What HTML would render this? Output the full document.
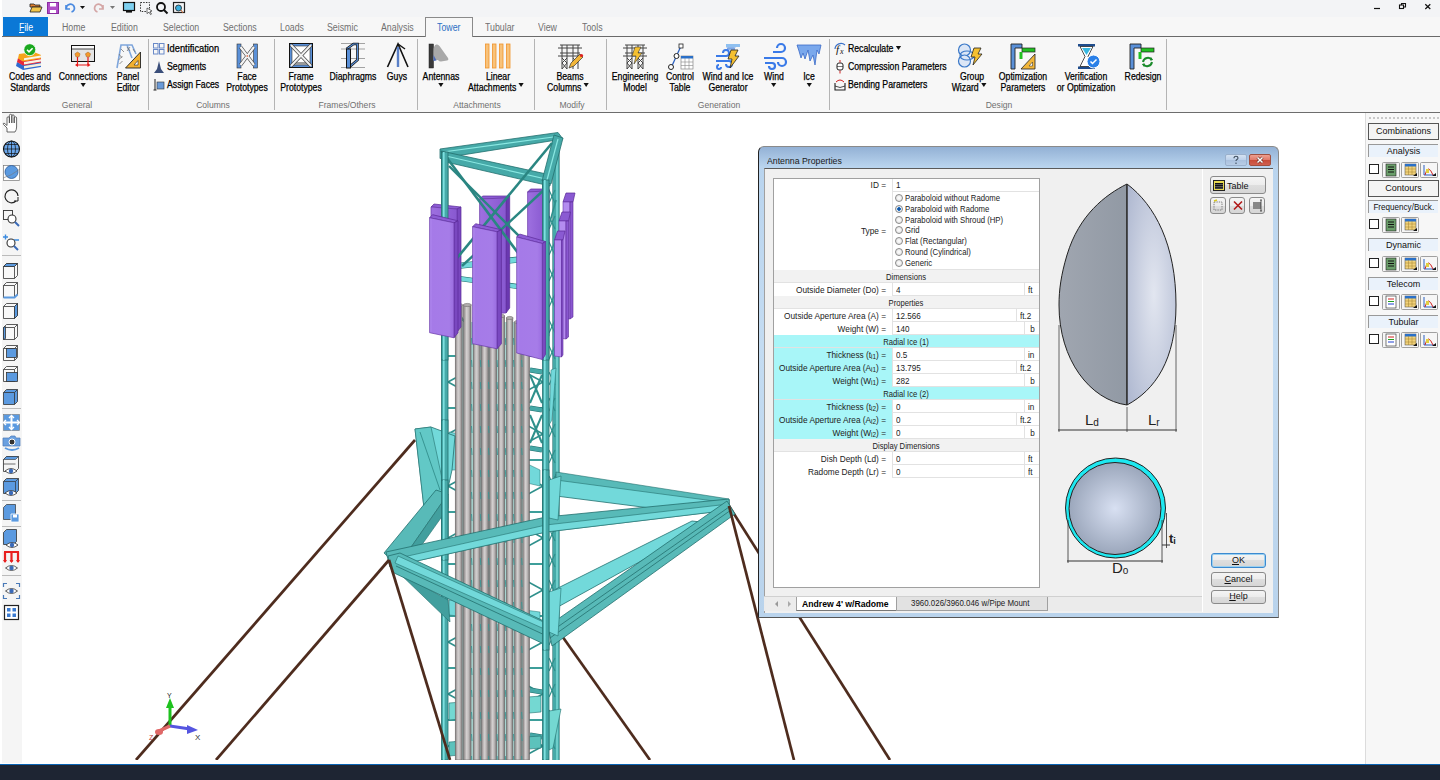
<!DOCTYPE html>
<html><head><meta charset="utf-8">
<style>
*{box-sizing:border-box;margin:0;padding:0}
html,body{width:1440px;height:780px;overflow:hidden;background:#fff;font-family:"Liberation Sans",sans-serif;position:relative}
.a{position:absolute}
.t{position:absolute;white-space:nowrap;font-size:10px;color:#111;letter-spacing:-0.3px}
.c{text-align:center}
#qat{left:0;top:0;width:1440px;height:17px;background:#f3f4f6}
#tabs{left:0;top:17px;width:1440px;height:20px;background:#f7f7f7}
#ribbon{left:0;top:37px;width:1440px;height:75px;background:#f7f7f7}
.tab{position:absolute;top:22px;font-size:10px;color:#707070;white-space:nowrap;transform:scaleX(.88);transform-origin:0 0}
.sep{position:absolute;top:39px;width:1px;height:71px;background:#b4b4b4}
.grp{position:absolute;top:99px;font-size:9.5px;color:#707070;white-space:nowrap;transform:translateX(-50%) scaleX(.9)}
.bl{position:absolute;font-size:10px;color:#000;-webkit-text-stroke:.25px #000;white-space:nowrap;text-align:center;line-height:11px;transform:translateX(-50%) scaleX(.87)}
.sl{position:absolute;font-size:10px;color:#000;-webkit-text-stroke:.25px #000;white-space:nowrap;transform:scaleX(.87);transform-origin:0 0}
.arr{display:inline-block;width:0;height:0;border-left:3.5px solid transparent;border-right:3.5px solid transparent;border-top:4px solid #111;vertical-align:middle;position:relative;top:-3px}
.dt{position:absolute;white-space:nowrap;font-size:9.5px;color:#1a1a1a;transform:scaleX(.92);transform-origin:0 0}
.gt{position:absolute;white-space:nowrap;font-size:9px;color:#222;line-height:11px}
.gt sub{font-size:7px;vertical-align:-1px;line-height:0}
.rad{position:absolute;width:8px;height:8px;border-radius:50%;border:1px solid #8a8a8a;background:radial-gradient(#fff,#ddd)}
.rad.sel{background:radial-gradient(circle,#0a3a78 0,#2a7ad0 40%,#e8f0f8 50%,#ddd)}
.btn{position:absolute;border:1px solid #8a8a8a;border-radius:3px;background:linear-gradient(#f4f4f4,#ececec 50%,#dedede 50%,#d6d6d6)}
.rbtn{position:absolute;left:1368px;width:71px;border:1px solid #555;background:#f4f4f4;font-size:9px;color:#111;text-align:center;line-height:15px;white-space:nowrap}
.rhdr{position:absolute;left:1368px;width:70px;height:13px;border-top:1px solid #999;border-left:1px solid #999;background:#eaf2fb;font-size:9px;color:#111;text-align:center;line-height:12px;white-space:nowrap}
#grid .gt{margin-top:1px}
</style></head><body>
<div id="qat" class="a"></div>
<div id="tabs" class="a"></div>
<div id="ribbon" class="a"></div>
<div class="a" style="left:0;top:0;width:2px;height:765px;background:#fff"></div>
<!-- tab line -->
<div class="a" style="left:2px;top:36px;width:1438px;height:1px;background:#6a6a6a"></div>
<div class="a" style="left:3px;top:17px;width:45px;height:19px;background:#0b78d6"></div>
<div class="tab" style="left:19px;color:#fff"><u>F</u>ile</div>
<div class="tab" style="left:62px">Home</div>
<div class="tab" style="left:111px">Edition</div>
<div class="tab" style="left:163px">Selection</div>
<div class="tab" style="left:223px">Sections</div>
<div class="tab" style="left:280px">Loads</div>
<div class="tab" style="left:327px">Seismic</div>
<div class="tab" style="left:381px">Analysis</div>
<div class="a" style="left:425px;top:17px;width:48px;height:20px;border:1px solid #8a8a8a;border-bottom:none;background:#f7f7f7"></div>
<div class="tab" style="left:437px;color:#2a6fc4">Tower</div>
<div class="tab" style="left:485px">Tubular</div>
<div class="tab" style="left:538px">View</div>
<div class="tab" style="left:582px">Tools</div>
<!-- QAT icons -->
<svg class="a" style="left:0;top:0" width="200" height="17">
 <path d="M30 4h4l1 1h5v2h-10z" fill="#e08030" stroke="#222" stroke-width=".8"/>
 <path d="M30 12l2-5h10l-2 5z" fill="#f3c64a" stroke="#222" stroke-width=".8"/>
 <rect x="47.5" y="2.5" width="11" height="11" fill="#b04ec8" stroke="#8a2aa0"/>
 <rect x="50" y="3" width="6" height="3.5" fill="#fff"/><rect x="50" y="10" width="6" height="3" fill="#fff"/>
 <path d="M66 5v4h4" fill="none" stroke="#4a8ae0" stroke-width="1.6"/><path d="M66.5 9a4 4 0 1 1 5 3" fill="none" stroke="#4a8ae0" stroke-width="1.8"/>
 <path d="M80 6h5l-2.5 3z" fill="#111"/>
 <path d="M103 5v4h-4" fill="none" stroke="#d4a6a6" stroke-width="1.6"/><path d="M102.5 9a4 4 0 1 0-5 3" fill="none" stroke="#d4a6a6" stroke-width="1.8"/>
 <path d="M110 6h5l-2.5 3z" fill="#777"/>
 <rect x="123.5" y="2.5" width="11" height="8" fill="#7ed0f0" stroke="#111" stroke-width="1.2"/><rect x="126" y="11" width="6" height="1.6" fill="#111"/>
 <rect x="140.5" y="2.5" width="9" height="9" fill="none" stroke="#333" stroke-dasharray="1.5 1.2"/><path d="M147 8l5 3-2 .6 1.5 2.5-1 .5-1.5-2.5-2 1.5z" fill="#fff" stroke="#333" stroke-width=".7"/>
 <circle cx="161" cy="7" r="4" fill="none" stroke="#111" stroke-width="1.8"/><path d="M164 10l3.5 3.5" stroke="#111" stroke-width="2"/>
 <rect x="173.5" y="2.5" width="11" height="10" fill="none" stroke="#222" stroke-width="1.2"/><circle cx="178.5" cy="8" r="3" fill="#3ab0e0" stroke="#222" stroke-width=".8"/><path d="M181 10l2 3" stroke="#c06030" stroke-width="1"/>
</svg>
<!-- ribbon icons -->
<svg class="a" style="left:0;top:37px" width="1170" height="60">
 <!-- Codes and Standards: books with check -->
 <g transform="translate(0,-37)">
  <path d="M17 62l6 3 18-3v5l-18 3-7-4z" fill="#2e6ad0"/><path d="M24 66l17-2.8v2.6l-17 2.8z" fill="#f4efdc"/>
  <path d="M18 58l5 3 18-3v4.5l-18 3-6-3.5z" fill="#e8283a"/><path d="M24 62l17-2.8v2.4l-17 2.8z" fill="#f6f2e4"/>
  <path d="M19 54l15-2 7 3v3.5l-18 3-5-3z" fill="#f6a41a"/><path d="M24 58.2l17-2.8v2l-17 2.8z" fill="#f8f4ea"/>
  <circle cx="29.8" cy="49.7" r="6" fill="#1aa81e" stroke="#fff" stroke-width=".8"/><path d="M27 49.8l2 2 3.6-3.6" fill="none" stroke="#fff" stroke-width="1.6"/>
 </g>
 <!-- Connections -->
 <g transform="translate(71,8)">
  <rect x=".5" y=".5" width="23" height="16" fill="#e4e4e4" stroke="#111" stroke-width="1"/><rect x="1" y="1" width="22" height="3" fill="#fafafa"/><path d="M1 4h22" stroke="#333" stroke-width=".9"/>
  <path d="M6.5 7l2.6 1.8-1 3h-3.2l-1-3z" fill="#f59a2a" stroke="#8a4a10" stroke-width=".4"/><path d="M17 7l2.6 1.8-1 3h-3.2l-1-3z" fill="#f59a2a" stroke="#8a4a10" stroke-width=".4"/>
  <path d="M6.5 12v8M17 12v8M6 20h11.5" stroke="#e81818" stroke-width="1.2"/><path d="M4 20l3-2v4zM19.5 20l-3-2v4z" fill="#e81818"/>
 </g>
 <!-- Panel Editor -->
 <g transform="translate(116,7)">
  <path d="M1 24L5 1h6l5 13M11 1l5 0 4 9" fill="none" stroke="#7fa6dc" stroke-width="1.6"/>
  <path d="M2.5 16l4-4M3 10l3 4M3.5 20l3-3M5 5l3 3M11 3l3 4M14 3l-3 4M17 5l2 3" stroke="#777" stroke-width=".8"/>
  <path d="M9.5 24L24.5 8v16z" fill="#f2b030" stroke="#222" stroke-width=".9"/><path d="M18 21l4-4.5v4.5z" fill="#fff" stroke="#222" stroke-width=".6"/>
 </g>
 <!-- Identification small -->
 <g transform="translate(153,6)" fill="none" stroke="#6a8ac8" stroke-width="1">
  <rect x=".5" y=".5" width="4.5" height="4.5"/><rect x="6.5" y=".5" width="4.5" height="4.5"/><rect x=".5" y="6.5" width="4.5" height="4.5"/><rect x="6.5" y="6.5" width="4.5" height="4.5"/>
 </g>
 <path d="M159 24l2 8 3 4h-10l3-4z" fill="#3a4e7a"/>
 <path d="M155 42v11M153.5 53h3" stroke="#222" stroke-width="1"/><rect x="157" y="45" width="7" height="7" fill="#6a9ad8" stroke="#333" stroke-width=".6"/>
 <!-- Face Prototypes -->
 <g transform="translate(237,7)">
  <rect x="0" y="0" width="4" height="24" fill="#5a90d8" stroke="#333" stroke-width=".6"/><rect x="16.5" y="0" width="4" height="24" fill="#5a90d8" stroke="#333" stroke-width=".6"/>
  <path d="M3.5 3l13.5 18M17 3L3.5 21" stroke="#444" stroke-width="3.6"/><path d="M3.5 3l13.5 18M17 3L3.5 21" stroke="#f4f4f4" stroke-width="2.2"/><circle cx="10.25" cy="12" r=".8" fill="#e05020"/>
 </g>
 <!-- Frame Prototypes -->
 <g transform="translate(289,6)">
  <rect x=".5" y=".5" width="23" height="24" fill="#5a90d8" stroke="#111" stroke-width="1"/><rect x="3" y="3" width="18" height="19" fill="#fff" stroke="#333" stroke-width=".6"/><rect x="3" y="19" width="18" height="3" fill="#999"/>
  <path d="M2 2l20 21M22 2L2 23" stroke="#444" stroke-width="3.4"/><path d="M2 2l20 21M22 2L2 23" stroke="#f0f0f0" stroke-width="2"/>
 </g>
 <!-- Diaphragms -->
 <g transform="translate(341,6)">
  <path d="M0 .5h24M0 6h24M0 15.5h24M0 24.5h24" stroke="#999" stroke-width=".9"/>
  <path d="M5.5 6l7-5h4v16l-7 6" fill="none" stroke="#111" stroke-width="2.6"/><path d="M5.5 6l7-5h4v16l-7 6" fill="none" stroke="#5a90d8" stroke-width="1.2"/>
  <rect x="5.5" y="6" width="4" height="19" fill="#5a90d8" stroke="#111" stroke-width="1"/>
 </g>
 <!-- Guys -->
 <g transform="translate(386,6)">
  <path d="M1.5 24L12 1l10 23" fill="none" stroke="#111" stroke-width="1.6"/><path d="M12 4v20" stroke="#5a80c8" stroke-width="2.4"/><path d="M12 1l7 5" fill="none" stroke="#111" stroke-width="1.5"/>
 </g>
 <!-- Antennas -->
 <g transform="translate(428,7)">
  <rect x="1" y="0" width="4.5" height="24" fill="#3a3a3a" stroke="#222" stroke-width=".5"/><path d="M5.5 16V7q0-6 3-6.5 1.5-.5 3 1.5l8.5 12q1 2-1 2.5l-6 1q-2 0-3-1.5z" fill="#a8a8a8"/><path d="M5.5 11l3 5.5-3 .5z" fill="#4a6ab8"/>
 </g>
 <!-- Linear Attachments -->
 <g transform="translate(485,7)" fill="#f8c27a" stroke="#f0932a" stroke-width=".8">
  <rect x=".5" y="0" width="3.5" height="24"/><rect x="7.5" y="0" width="3.5" height="24"/><rect x="14.5" y="0" width="3.5" height="24"/><rect x="21.5" y="0" width="3.5" height="24"/>
 </g>
 <!-- Beams Columns -->
 <g transform="translate(558,7)">
  <path d="M2 1h20M0 4h24M2 9h20M0 12h24M4 1v24M9 1v24M15 1v24M20 1v24M4 14l5 5M9 14l-5 5M4 19l5 6M9 19l-5 6M15 14l5 5M20 14l-5 5" stroke="#444" stroke-width="1"/>
  <path d="M11 24l2-5 9-9 3 3-9 9z" fill="#f2b63a" stroke="#333" stroke-width=".7"/><circle cx="23.5" cy="11.5" r="1.6" fill="#e02020"/>
 </g>
 <!-- Engineering Model -->
 <g transform="translate(623,7)">
  <path d="M2 1h20M0 4h24M2 9h20M0 12h24M4 1v24M9 1v24M15 1v24M20 1v24M4 14l5 5M9 14l-5 5M4 19l5 6M9 19l-5 6M15 14l5 5M20 14l-5 5M15 19l5 6M20 19l-5 6" stroke="#444" stroke-width="1"/>
  <path d="M12 3h6l-3 6h4l-8 11 2-8h-4z" fill="#f5c030" stroke="#333" stroke-width=".6"/>
 </g>
 <!-- Control Table -->
 <g transform="translate(668,7)">
  <path d="M3 24L13 2" stroke="#2a60c0" stroke-width="1.3"/><circle cx="3" cy="23" r="2.5" fill="#fff" stroke="#222"/><circle cx="8.5" cy="12" r="2.5" fill="#fff" stroke="#222"/><rect x="11" y="0" width="4" height="4" fill="#fff" stroke="#222" stroke-width=".8"/>
  <rect x="13" y="12" width="12" height="13" fill="#fff" stroke="#888" stroke-width=".7"/><rect x="13" y="12" width="12" height="2.5" fill="#2a70c8"/><path d="M13 18h12M13 21.5h12M17 14v11M21 14v11" stroke="#888" stroke-width=".6"/>
 </g>
 <!-- Wind and Ice Generator -->
 <g transform="translate(716,7)">
  <path d="M10 0h14v3H10z" fill="#8fc0f0"/><path d="M11 3l1 3 1-3 1 3 1-3 1 3 1-3 1 3 1-3" stroke="#5a90e0" fill="none" stroke-width=".8"/>
  <path d="M0 12h10a3 3 0 1 0-3-3M0 17h13a3 3 0 1 1-3 3M3 21a2 2 0 1 0 2 2" fill="none" stroke="#3a7ae8" stroke-width="2"/>
  <path d="M15 6h7l-3 6h4l-9 12 2-9h-4z" fill="#f5c030" stroke="#222" stroke-width=".8"/>
 </g>
 <!-- Wind -->
 <g transform="translate(763,8)" fill="none" stroke="#3a7ae8" stroke-width="2.2">
  <path d="M10 7h8a4 4 0 1 0-4-4"/><path d="M1 13h18a4 4 0 1 1-4 4"/><path d="M2 18h7a3 3 0 1 1-3 3"/>
 </g>
 <!-- Ice -->
 <g transform="translate(797,8)">
  <path d="M0 0h24l-2 9-2-4-2 15-2-10-3 6-2-11-3 9-2-6-2 5-2-7z" fill="#7aa8ec" stroke="#3a6ac8" stroke-width=".8"/>
 </g>
 <!-- Recalculate fx -->
 <g transform="translate(834,4)">
  <path d="M1 8a6 6 0 0 1 10-4" fill="none" stroke="#3a70c8" stroke-width="1.2"/>
  <text x="2" y="12" font-family="Liberation Serif" font-style="italic" font-size="11" fill="#111">f</text><text x="6" y="13" font-family="Liberation Serif" font-style="italic" font-size="8" fill="#111">x</text>
 </g>
 <g transform="translate(836,23)">
  <rect x="1" y="3" width="6" height="7" rx="2" fill="#fff" stroke="#222"/><path d="M1 6.5h6" stroke="#222" stroke-width=".6"/><path d="M4 0v2.5M4 10.5v3" stroke="#d02020" stroke-width="1"/>
 </g>
 <g transform="translate(834,41)">
  <path d="M1 5v7h10V5" fill="none" stroke="#222" stroke-width="1.1"/><path d="M1 8q5 3 10 0" fill="none" stroke="#222" stroke-width=".8"/><path d="M2 4q4-4 8 0" fill="none" stroke="#d02020" stroke-width="1"/>
 </g>
 <!-- Group Wizard -->
 <g transform="translate(958,6)">
  <circle cx="6.5" cy="7" r="6" fill="#dbe6f6" stroke="#3a78c8" stroke-width="1.2"/><circle cx="6.5" cy="18" r="6" fill="#dbe6f6" stroke="#3a78c8" stroke-width="1.2"/><ellipse cx="9" cy="12.5" rx="7" ry="4.5" fill="none" stroke="#3a78c8" stroke-width="1.2"/>
  <path d="M16 5h7l-3 6h4l-9 11 2-8h-4z" fill="#f5c030" stroke="#222" stroke-width=".8"/>
 </g>
 <!-- Optimization Parameters -->
 <g transform="translate(1011,7)">
  <path d="M0 25V0h11v4H4v21z" fill="#5a90d8" stroke="#222" stroke-width=".9"/>
  <rect x="11" y="4" width="13" height="4" fill="#22c022" stroke="#222" stroke-width=".7"/><path d="M10 8v7" stroke="#22c022" stroke-width="3"/>
  <path d="M10 25L24 10v15z" fill="#f2b63a" stroke="#222" stroke-width=".8"/><path d="M18 22l3.5-4v4z" fill="#fff" stroke="#222" stroke-width=".5"/>
 </g>
 <!-- Verification -->
 <g transform="translate(1078,7)">
  <rect x="0" y="0" width="17" height="2.5" fill="#1f4c8c"/><rect x="0" y="22.5" width="17" height="2.5" fill="#1f4c8c"/>
  <path d="M2 2.5h13l-5 10 5 10H2l5-10z" fill="#fff" stroke="#222" stroke-width=".8"/><path d="M4 4h9l-4.5 7z" fill="#3ab8e0"/>
  <circle cx="15.5" cy="17.5" r="6.5" fill="#2a80e8" stroke="#fff" stroke-width="1"/><path d="M12.5 17.5l2 2 4-4" fill="none" stroke="#fff" stroke-width="1.5"/>
 </g>
 <!-- Redesign -->
 <g transform="translate(1130,7)">
  <path d="M0 25V0h11v4H4v21z" fill="#5a90d8" stroke="#222" stroke-width=".9"/>
  <rect x="11" y="4" width="13" height="4" fill="#22c022" stroke="#222" stroke-width=".7"/><path d="M10 8v7" stroke="#22c022" stroke-width="3"/>
  <path d="M13 18a5 5 0 0 1 9-2M22 18a5 5 0 0 1-9 2" fill="none" stroke="#1a8a2a" stroke-width="2"/><path d="M21 13l2 3-3 .5zM14 23l-2-3 3-.5z" fill="#1a8a2a"/>
 </g>
</svg>
<!-- ribbon labels -->
<div class="bl" style="left:29.5px;top:71px">Codes and<br>Standards</div>
<div class="bl" style="left:82.5px;top:71px">Connections<br><span class="arr"></span></div>
<div class="bl" style="left:128px;top:71px">Panel<br>Editor</div>
<div class="sl" style="left:166.5px;top:43px;transform:scaleX(.93)">Identification</div>
<div class="sl" style="left:166.5px;top:61px">Segments</div>
<div class="sl" style="left:167px;top:79px">Assign Faces</div>
<div class="bl" style="left:246.5px;top:71px">Face<br>Prototypes</div>
<div class="bl" style="left:300.5px;top:71px">Frame<br>Prototypes</div>
<div class="bl" style="left:352.7px;top:71px">Diaphragms</div>
<div class="bl" style="left:397px;top:71px">Guys</div>
<div class="bl" style="left:441px;top:71px">Antennas<br><span class="arr"></span></div>
<div class="bl" style="left:497.5px;top:71px">Linear</div>
<div class="bl" style="left:496px;top:82px">Attachments <span class="arr"></span></div>
<div class="bl" style="left:570px;top:71px">Beams</div>
<div class="bl" style="left:568px;top:82px">Columns <span class="arr"></span></div>
<div class="bl" style="left:635px;top:71px">Engineering<br>Model</div>
<div class="bl" style="left:680.4px;top:71px">Control<br>Table</div>
<div class="bl" style="left:728px;top:71px">Wind and Ice<br>Generator</div>
<div class="bl" style="left:774.3px;top:71px">Wind<br><span class="arr"></span></div>
<div class="bl" style="left:809px;top:71px">Ice<br><span class="arr"></span></div>
<div class="sl" style="left:847.6px;top:43px">Recalculate <span class="arr" style="top:-1px"></span></div>
<div class="sl" style="left:847.6px;top:61px">Compression Parameters</div>
<div class="sl" style="left:847.6px;top:79px">Bending Parameters</div>
<div class="bl" style="left:972px;top:71px">Group</div>
<div class="bl" style="left:969px;top:82px">Wizard <span class="arr"></span></div>
<div class="bl" style="left:1023px;top:71px">Optimization<br>Parameters</div>
<div class="bl" style="left:1086.3px;top:71px">Verification<br>or Optimization</div>
<div class="bl" style="left:1142.5px;top:71px">Redesign</div>
<div class="sep" style="left:148px"></div>
<div class="sep" style="left:274px"></div>
<div class="sep" style="left:417px"></div>
<div class="sep" style="left:534px"></div>
<div class="sep" style="left:606px"></div>
<div class="sep" style="left:829px"></div>
<div class="sep" style="left:1166px"></div>
<div class="grp" style="left:77px">General</div>
<div class="grp" style="left:212.5px">Columns</div>
<div class="grp" style="left:346.7px">Frames/Others</div>
<div class="grp" style="left:477px">Attachments</div>
<div class="grp" style="left:571.8px">Modify</div>
<div class="grp" style="left:718.7px">Generation</div>
<div class="grp" style="left:999.2px">Design</div>

<!-- ribbon bottom -->
<div class="a" style="left:2px;top:112px;width:1438px;height:1px;background:#6d6d6d"></div>

<!-- window buttons -->
<svg class="a" style="left:1370px;top:0" width="70" height="14">
 <path d="M4 8.5h6" stroke="#111" stroke-width="1.2"/>
 <rect x="29.5" y="5" width="4" height="3.5" fill="none" stroke="#111" stroke-width="1.1"/><path d="M31.5 5V3.5h4v3.5h-2" fill="none" stroke="#111" stroke-width="1.1"/>
 <path d="M55.3 4.2l5 4.8M60.3 4.2l-5 4.8" stroke="#111" stroke-width="1.2"/>
</svg>
<!-- left toolbar -->
<div class="a" style="left:2px;top:113px;width:20px;height:650px;background:#f5f5f5"></div>
<!-- right panel -->
<div class="a" style="left:1365px;top:113px;width:1px;height:651px;background:#dcdcdc"></div>
<div class="a" style="left:1366px;top:113px;width:74px;height:651px;background:#f7f7f7"></div>
<!--LEFTTB--><svg class="a" style="left:0;top:113px" width="24" height="520">
<defs><g id="cube"><path d="M3.5 4.5l3-3h11v12l-3 3h-11z" fill="#f8f8f8" stroke="#333" stroke-width=".8"/><path d="M3.5 4.5h11v12M14.5 4.5l3-3" fill="none" stroke="#333" stroke-width=".8"/></g>
<g id="eye"><path d="M4 0q6-5 12 0q-6 5-12 0z" fill="#fff" stroke="#333" stroke-width=".8"/><circle cx="10" cy="0" r="2.2" fill="#3a6ab8"/></g></defs>
<g transform="translate(0,0)">
 <path d="M7 19L7 15L3.5 11.5Q2.8 10.3 4 10L7 12.5L7 5Q7 3.8 8.2 3.8Q9.4 3.8 9.4 5L9.4 10L9.4 2.5Q9.4 1.3 10.6 1.3Q11.8 1.3 11.8 2.5L11.8 10L11.8 3Q11.8 1.8 13 1.8Q14.2 1.8 14.2 3L14.2 10L14.2 5Q14.2 3.8 15.4 3.8Q16.6 3.8 16.6 5L16.6 14Q16.6 17 15 19Z" fill="#fff" stroke="#444" stroke-width=".8"/>
</g>
<g transform="translate(0,36)"><circle cx="11.5" cy="0" r="8" fill="#6aa6ea" stroke="#111" stroke-width="1.1"/><path d="M3.5 0h16M11.5-8v16M5-4.5h13M5 4.5h13" stroke="#111" stroke-width=".7"/><ellipse cx="11.5" cy="0" rx="4" ry="8" fill="none" stroke="#111" stroke-width=".7"/></g>
<g transform="translate(0,60)"><rect x="3.5" y="-7.5" width="16" height="15" fill="#fff" stroke="#777" stroke-width=".7"/><circle cx="11.5" cy="-1" r="6.5" fill="#5b9ae0" stroke="#2a5a9a" stroke-width=".8"/><path d="M3 5q8-2 17-9" stroke="#777" stroke-width=".6" fill="none"/></g>
<g transform="translate(0,82)"><path d="M16 6a6.5 6.5 0 1 1 2-5" fill="none" stroke="#222" stroke-width="1.2"/><path d="M14 6h4v-4" fill="none" stroke="#222" stroke-width="1"/></g>
<g transform="translate(0,105)"><rect x="3.5" y="-7.5" width="9" height="9" fill="none" stroke="#333" stroke-width=".9"/><circle cx="12" cy="1" r="4" fill="#fff" stroke="#333" stroke-width="1.1"/><path d="M15 4l4 4" stroke="#3a6ab8" stroke-width="2"/></g>
<g transform="translate(0,129)"><path d="M3 -5h5M5.5-7.5v5M14 -2h5" stroke="#3a8ae0" stroke-width="1.4"/><circle cx="11" cy="1" r="4" fill="#fff" stroke="#333" stroke-width="1.1"/><path d="M14 4l4 4" stroke="#3a6ab8" stroke-width="2"/></g>
<path d="M2 142.5h19" stroke="#bbb"/>
<g transform="translate(0,149)"><use href="#cube"/><path d="M3.5 4.5l3-3h11l-3 3z" fill="#5b9ae0" stroke="#333" stroke-width=".8"/></g>
<g transform="translate(0,168)"><use href="#cube"/><path d="M3.5 16.5h11l3-3" fill="none" stroke="#5b9ae0" stroke-width="2"/></g>
<g transform="translate(0,189)"><use href="#cube"/><path d="M14.5 4.5l3-3v12l-3 3z" fill="#5b9ae0" stroke="#333" stroke-width=".8"/></g>
<g transform="translate(0,210)"><use href="#cube"/><path d="M3.5 4.5l2-1v12l-2 1z" fill="#5b9ae0" stroke="#333" stroke-width=".8"/></g>
<g transform="translate(0,231)"><use href="#cube"/><rect x="6.5" y="4.5" width="10" height="9" fill="#5b9ae0" stroke="#333" stroke-width=".8"/></g>
<g transform="translate(0,252)"><use href="#cube"/><rect x="6.5" y="7.5" width="11" height="9" fill="#5b9ae0" stroke="#333" stroke-width=".8"/></g>
<g transform="translate(0,275)"><path d="M3.5 4.5l3-3h11v12l-3 3h-11z" fill="#5b9ae0" stroke="#333" stroke-width=".8"/><path d="M3.5 4.5h11v12M14.5 4.5l3-3" fill="none" stroke="#333" stroke-width=".8"/></g>
<path d="M2 295.5h19" stroke="#bbb"/>
<g transform="translate(0,300)"><rect x="3.5" y="1.5" width="16" height="16" fill="#5b9ae0" stroke="#777" stroke-width=".6"/><path d="M11.5 3v13M4 9.5h15" stroke="#fff" stroke-width="2"/><path d="M9 5l2.5-2.5L14 5M9 14l2.5 2.5L14 14M6 7l-2.5 2.5L6 12M17 7l2.5 2.5L17 12" fill="none" stroke="#fff" stroke-width="1.4"/></g>
<g transform="translate(0,321)"><path d="M3 4h6l2-2h4l1 2h4v8H3z" fill="#6aa0e0" stroke="#4a7ab8" stroke-width=".7"/><circle cx="12" cy="8" r="3" fill="#333" stroke="#fff"/><path d="M5 14q7 4 14 0" fill="none" stroke="#5b9ae0" stroke-width="2"/></g>
<g transform="translate(0,342)"><path d="M3.5 4.5l3-3h12v12l-3 3h-12z" fill="none" stroke="#333" stroke-width=".8"/><path d="M3.5 4.5l3-3h12l-3 3z" fill="#5b9ae0" stroke="#333" stroke-width=".6"/><path d="M3.5 9h12" stroke="#333" stroke-width=".7"/><use href="#eye" x="1" y="16"/></g>
<g transform="translate(0,364)"><path d="M3.5 4.5l3-3h12v12l-3 3h-12z" fill="#5b9ae0" stroke="#333" stroke-width=".8"/><path d="M3.5 4.5h12v12M15.5 4.5l3-3" fill="none" stroke="#333" stroke-width=".7"/><use href="#eye" x="1" y="16"/></g>
<path d="M2 387.5h19" stroke="#bbb"/>
<g transform="translate(0,390)"><path d="M3.5 4.5l3-3h9v12l-3 3h-9z" fill="#5b9ae0" stroke="#333" stroke-width=".7"/><path d="M11 11h8v8h-8z" fill="#5b9ae0" stroke="#fff" stroke-width=".8"/><rect x="13" y="11.5" width="4" height="3" fill="#fff"/></g>
<path d="M2 413.5h19" stroke="#bbb"/>
<g transform="translate(0,415)"><path d="M3.5 4.5l3-3h10v12l-3 3h-10z" fill="#5b9ae0" stroke="#333" stroke-width=".8"/><use href="#eye" x="2" y="17"/></g>
<g transform="translate(0,437)"><path d="M4 2h15M5 2v10M11.5 2v10M18 2v10" stroke="#e82020" stroke-width="2.2"/><path d="M3 10l2 3 2-3M9.5 10l2 3 2-3M16 10l2 3 2-3" fill="#e82020"/><use href="#eye" x="1.5" y="18"/></g>
<path d="M2 462.5h19" stroke="#bbb"/>
<g transform="translate(0,468)"><path d="M3.5 6V2.5H7M16 2.5h3.5V6M3.5 14v3.5H7M16 17.5h3.5V14" fill="none" stroke="#4a7ab8" stroke-width="1.2"/><use href="#eye" x="1.5" y="10"/></g>
<g transform="translate(0,491)"><rect x="4.5" y="1.5" width="14" height="14" fill="#fff" stroke="#222" stroke-width="1.2"/><rect x="7" y="4" width="3.5" height="3.5" fill="#3a7ad0"/><rect x="12.5" y="4" width="3.5" height="3.5" fill="#3a7ad0"/><rect x="7" y="9.5" width="3.5" height="3.5" fill="#3a7ad0"/><rect x="12.5" y="9.5" width="3.5" height="3.5" fill="#3a7ad0"/></g>
</svg>
<!--/LEFTTB--><!--RP--><div class="a" style="left:1369px;top:117px;width:70px;height:2px;background:repeating-linear-gradient(90deg,#c8c8c8 0 2px,transparent 2px 4px)"></div>
<div class="rbtn" style="top:123px;height:17px">Combinations</div>
<div class="rhdr" style="top:144px">Analysis</div>
<div class="rbtn" style="top:180px;height:17px">Contours</div>
<div class="rhdr" style="top:200px"><span style="display:inline-block;transform:scaleX(.9)">Frequency/Buck.</span></div>
<div class="rhdr" style="top:238px">Dynamic</div>
<div class="rhdr" style="top:277px">Telecom</div>
<div class="rhdr" style="top:315px">Tubular</div>
<svg class="a" style="left:1366px;top:158px" width="74" height="195">
<defs>
 <g id="cb"><rect x="3.5" y="2.5" width="9" height="9" fill="#fff" stroke="#222" stroke-width="1"/></g>
 <g id="b1"><rect x="16.5" y=".5" width="17" height="15" rx="1" fill="#f6f6f6" stroke="#8a8a8a" stroke-width=".8"/><rect x="20" y="2" width="10" height="12" fill="#6a9e6a" stroke="#222" stroke-width=".6"/><path d="M22 5h6M22 7.5h6M22 10h6" stroke="#111" stroke-width="1"/></g>
 <g id="b1r"><rect x="16.5" y=".5" width="17" height="15" rx="1" fill="#f6f6f6" stroke="#8a8a8a" stroke-width=".8"/><rect x="20" y="2" width="10" height="12" fill="#fff" stroke="#222" stroke-width=".6"/><path d="M22 5h6" stroke="#d02020"/><path d="M22 7.5h6" stroke="#20a020"/><path d="M22 10h6" stroke="#2040d0"/></g>
 <g id="b2"><rect x="35.5" y=".5" width="17" height="15" rx="1" fill="#f6f6f6" stroke="#8a8a8a" stroke-width=".8"/><rect x="39" y="2" width="11" height="11" fill="#f2d27a" stroke="#444" stroke-width=".5"/><rect x="39" y="2" width="11" height="2.5" fill="#2a70c8"/><path d="M39 7h11M39 10h11M42.5 4v9M46 4v9" stroke="#a08030" stroke-width=".5"/><path d="M47 14l4-3v3z" fill="#111"/></g>
 <g id="b3"><rect x="54.5" y=".5" width="17" height="15" rx="1" fill="#f6f6f6" stroke="#8a8a8a" stroke-width=".8"/><path d="M58 3v10h10" fill="none" stroke="#2a60c0" stroke-width="1"/><path d="M59 13q3-12 8 0" fill="none" stroke="#d02020" stroke-width="1"/><rect x="60" y="7" width="3" height="4" fill="#e0d040"/><path d="M66 14l4-3v3z" fill="#111"/></g>
</defs>
<g transform="translate(0,4)"><use href="#cb"/><use href="#b1"/><use href="#b2"/><use href="#b3"/></g>
<g transform="translate(0,59)"><use href="#cb"/><use href="#b1"/><use href="#b2"/></g>
<g transform="translate(0,98)"><use href="#cb"/><use href="#b1"/><use href="#b2"/><use href="#b3"/></g>
<g transform="translate(0,136)"><use href="#cb"/><use href="#b1r"/><use href="#b2"/><use href="#b3"/></g>
<g transform="translate(0,174)"><use href="#cb"/><use href="#b1r"/><use href="#b2"/><use href="#b3"/></g>
</svg>
<!--/RP-->
<!-- bottom bar -->
<div class="a" style="left:0;top:764px;width:1440px;height:1px;background:#0a64b4"></div>
<div class="a" style="left:0;top:765px;width:1440px;height:15px;background:#1e2533"></div>

<!--TOWERSTART--><svg class="a" style="left:0;top:0" width="1440" height="780"><defs>
<clipPath id="vc"><rect x="22" y="113" width="1343" height="647"/></clipPath>
<linearGradient id="pg" x1="0" x2="1"><stop offset="0" stop-color="#8a8484"/><stop offset=".4" stop-color="#d4d0d0"/><stop offset=".65" stop-color="#c0bcbc"/><stop offset="1" stop-color="#7c7878"/></linearGradient>
<linearGradient id="ap" x1="0" x2="1"><stop offset="0" stop-color="#b18af0"/><stop offset=".12" stop-color="#a57ae8"/><stop offset=".8" stop-color="#a67ce8"/><stop offset="1" stop-color="#9a6ce0"/></linearGradient>
<linearGradient id="ab" x1="0" x2="1"><stop offset="0" stop-color="#9e70e0"/><stop offset="1" stop-color="#8858d0"/></linearGradient>
</defs><g clip-path="url(#vc)">
<line x1="415" y1="440" x2="136" y2="760" stroke="#4e2c1e" stroke-width="2.7"/>
<line x1="729" y1="506" x2="890" y2="760" stroke="#4e2c1e" stroke-width="2.7"/>
<line x1="556" y1="137" x2="556" y2="760" stroke="#23706f" stroke-width="7.2"/>
<line x1="556" y1="137" x2="556" y2="760" stroke="#46a9a8" stroke-width="6"/>
<line x1="557" y1="140" x2="557" y2="760" stroke="#8ae8e2" stroke-width="1.2"/>
<line x1="549" y1="190" x2="555" y2="203" stroke="#2f908c" stroke-width="1.2"/>
<line x1="555" y1="190" x2="549" y2="203" stroke="#2f908c" stroke-width="1.2"/>
<line x1="549" y1="216" x2="555" y2="229" stroke="#2f908c" stroke-width="1.2"/>
<line x1="555" y1="216" x2="549" y2="229" stroke="#2f908c" stroke-width="1.2"/>
<line x1="549" y1="242" x2="555" y2="255" stroke="#2f908c" stroke-width="1.2"/>
<line x1="555" y1="242" x2="549" y2="255" stroke="#2f908c" stroke-width="1.2"/>
<line x1="549" y1="268" x2="555" y2="281" stroke="#2f908c" stroke-width="1.2"/>
<line x1="555" y1="268" x2="549" y2="281" stroke="#2f908c" stroke-width="1.2"/>
<line x1="549" y1="294" x2="555" y2="307" stroke="#2f908c" stroke-width="1.2"/>
<line x1="555" y1="294" x2="549" y2="307" stroke="#2f908c" stroke-width="1.2"/>
<line x1="549" y1="320" x2="555" y2="333" stroke="#2f908c" stroke-width="1.2"/>
<line x1="555" y1="320" x2="549" y2="333" stroke="#2f908c" stroke-width="1.2"/>
<line x1="549" y1="346" x2="555" y2="359" stroke="#2f908c" stroke-width="1.2"/>
<line x1="555" y1="346" x2="549" y2="359" stroke="#2f908c" stroke-width="1.2"/>
<line x1="549" y1="372" x2="555" y2="385" stroke="#2f908c" stroke-width="1.2"/>
<line x1="555" y1="372" x2="549" y2="385" stroke="#2f908c" stroke-width="1.2"/>
<line x1="549" y1="398" x2="555" y2="411" stroke="#2f908c" stroke-width="1.2"/>
<line x1="555" y1="398" x2="549" y2="411" stroke="#2f908c" stroke-width="1.2"/>
<line x1="549" y1="424" x2="555" y2="437" stroke="#2f908c" stroke-width="1.2"/>
<line x1="555" y1="424" x2="549" y2="437" stroke="#2f908c" stroke-width="1.2"/>
<line x1="549" y1="450" x2="555" y2="463" stroke="#2f908c" stroke-width="1.2"/>
<line x1="555" y1="450" x2="549" y2="463" stroke="#2f908c" stroke-width="1.2"/>
<line x1="549" y1="476" x2="555" y2="489" stroke="#2f908c" stroke-width="1.2"/>
<line x1="555" y1="476" x2="549" y2="489" stroke="#2f908c" stroke-width="1.2"/>
<line x1="549" y1="502" x2="555" y2="515" stroke="#2f908c" stroke-width="1.2"/>
<line x1="555" y1="502" x2="549" y2="515" stroke="#2f908c" stroke-width="1.2"/>
<line x1="549" y1="528" x2="555" y2="541" stroke="#2f908c" stroke-width="1.2"/>
<line x1="555" y1="528" x2="549" y2="541" stroke="#2f908c" stroke-width="1.2"/>
<line x1="549" y1="554" x2="555" y2="567" stroke="#2f908c" stroke-width="1.2"/>
<line x1="555" y1="554" x2="549" y2="567" stroke="#2f908c" stroke-width="1.2"/>
<line x1="549" y1="580" x2="555" y2="593" stroke="#2f908c" stroke-width="1.2"/>
<line x1="555" y1="580" x2="549" y2="593" stroke="#2f908c" stroke-width="1.2"/>
<line x1="549" y1="606" x2="555" y2="619" stroke="#2f908c" stroke-width="1.2"/>
<line x1="555" y1="606" x2="549" y2="619" stroke="#2f908c" stroke-width="1.2"/>
<line x1="549" y1="632" x2="555" y2="645" stroke="#2f908c" stroke-width="1.2"/>
<line x1="555" y1="632" x2="549" y2="645" stroke="#2f908c" stroke-width="1.2"/>
<line x1="549" y1="658" x2="555" y2="671" stroke="#2f908c" stroke-width="1.2"/>
<line x1="555" y1="658" x2="549" y2="671" stroke="#2f908c" stroke-width="1.2"/>
<line x1="549" y1="684" x2="555" y2="697" stroke="#2f908c" stroke-width="1.2"/>
<line x1="555" y1="684" x2="549" y2="697" stroke="#2f908c" stroke-width="1.2"/>
<line x1="549" y1="710" x2="555" y2="723" stroke="#2f908c" stroke-width="1.2"/>
<line x1="555" y1="710" x2="549" y2="723" stroke="#2f908c" stroke-width="1.2"/>
<line x1="549" y1="736" x2="555" y2="749" stroke="#2f908c" stroke-width="1.2"/>
<line x1="555" y1="736" x2="549" y2="749" stroke="#2f908c" stroke-width="1.2"/>
<line x1="448" y1="330" x2="543" y2="382" stroke="#2f908c" stroke-width="1.6"/>
<line x1="543" y1="330" x2="448" y2="382" stroke="#2f908c" stroke-width="1.6"/>
<line x1="448" y1="356" x2="543" y2="356" stroke="#3d9e9a" stroke-width="2.2"/>
<line x1="448" y1="382" x2="543" y2="434" stroke="#2f908c" stroke-width="1.6"/>
<line x1="543" y1="382" x2="448" y2="434" stroke="#2f908c" stroke-width="1.6"/>
<line x1="448" y1="408" x2="543" y2="408" stroke="#3d9e9a" stroke-width="2.2"/>
<line x1="448" y1="434" x2="543" y2="486" stroke="#2f908c" stroke-width="1.6"/>
<line x1="543" y1="434" x2="448" y2="486" stroke="#2f908c" stroke-width="1.6"/>
<line x1="448" y1="460" x2="543" y2="460" stroke="#3d9e9a" stroke-width="2.2"/>
<line x1="448" y1="486" x2="543" y2="538" stroke="#2f908c" stroke-width="1.6"/>
<line x1="543" y1="486" x2="448" y2="538" stroke="#2f908c" stroke-width="1.6"/>
<line x1="448" y1="512" x2="543" y2="512" stroke="#3d9e9a" stroke-width="2.2"/>
<line x1="448" y1="538" x2="543" y2="590" stroke="#2f908c" stroke-width="1.6"/>
<line x1="543" y1="538" x2="448" y2="590" stroke="#2f908c" stroke-width="1.6"/>
<line x1="448" y1="564" x2="543" y2="564" stroke="#3d9e9a" stroke-width="2.2"/>
<line x1="448" y1="590" x2="543" y2="642" stroke="#2f908c" stroke-width="1.6"/>
<line x1="543" y1="590" x2="448" y2="642" stroke="#2f908c" stroke-width="1.6"/>
<line x1="448" y1="616" x2="543" y2="616" stroke="#3d9e9a" stroke-width="2.2"/>
<line x1="448" y1="642" x2="543" y2="694" stroke="#2f908c" stroke-width="1.6"/>
<line x1="543" y1="642" x2="448" y2="694" stroke="#2f908c" stroke-width="1.6"/>
<line x1="448" y1="668" x2="543" y2="668" stroke="#3d9e9a" stroke-width="2.2"/>
<line x1="448" y1="694" x2="543" y2="746" stroke="#2f908c" stroke-width="1.6"/>
<line x1="543" y1="694" x2="448" y2="746" stroke="#2f908c" stroke-width="1.6"/>
<line x1="448" y1="720" x2="543" y2="720" stroke="#3d9e9a" stroke-width="2.2"/>
<line x1="448" y1="746" x2="543" y2="798" stroke="#2f908c" stroke-width="1.6"/>
<line x1="543" y1="746" x2="448" y2="798" stroke="#2f908c" stroke-width="1.6"/>
<line x1="448" y1="772" x2="543" y2="772" stroke="#3d9e9a" stroke-width="2.2"/>
<polygon points="449,432 470,436 540,470 540,486 470,470 449,470" fill="#72d8da" stroke="#23706f" stroke-width="0.5" stroke-linejoin="round"/>
<polygon points="449,600 540,612 540,625 449,615" fill="#72d8da" stroke="#23706f" stroke-width="0.5" stroke-linejoin="round"/>
<line x1="448" y1="267" x2="543" y2="257" stroke="#23706f" stroke-width="6.2"/>
<line x1="448" y1="267" x2="543" y2="257" stroke="#72d8da" stroke-width="5"/>
<line x1="448" y1="277" x2="543" y2="290" stroke="#23706f" stroke-width="5.2"/>
<line x1="448" y1="277" x2="543" y2="290" stroke="#72d8da" stroke-width="4"/>
<line x1="449" y1="300" x2="470" y2="330" stroke="#2a8682" stroke-width="2.2"/>
<line x1="520" y1="290" x2="542" y2="260" stroke="#2a8682" stroke-width="2.2"/>
<line x1="530" y1="370" x2="542" y2="372" stroke="#23706f" stroke-width="5.2"/>
<line x1="530" y1="370" x2="542" y2="372" stroke="#46a9a8" stroke-width="4"/>
<line x1="530" y1="408" x2="542" y2="410" stroke="#23706f" stroke-width="5.2"/>
<line x1="530" y1="408" x2="542" y2="410" stroke="#46a9a8" stroke-width="4"/>
<line x1="530" y1="448" x2="542" y2="450" stroke="#23706f" stroke-width="5.2"/>
<line x1="530" y1="448" x2="542" y2="450" stroke="#46a9a8" stroke-width="4"/>
<line x1="530" y1="690" x2="542" y2="692" stroke="#23706f" stroke-width="5.2"/>
<line x1="530" y1="690" x2="542" y2="692" stroke="#46a9a8" stroke-width="4"/>
<line x1="530" y1="735" x2="542" y2="737" stroke="#23706f" stroke-width="5.2"/>
<line x1="530" y1="735" x2="542" y2="737" stroke="#46a9a8" stroke-width="4"/>
<line x1="530" y1="375" x2="542" y2="403" stroke="#2f908c" stroke-width="2"/>
<line x1="542" y1="375" x2="530" y2="403" stroke="#2f908c" stroke-width="2"/>
<line x1="530" y1="415" x2="542" y2="443" stroke="#2f908c" stroke-width="2"/>
<line x1="542" y1="415" x2="530" y2="443" stroke="#2f908c" stroke-width="2"/>
<polygon points="551,370 556,368 552,420 549,425" fill="#72d8da" stroke="#23706f" stroke-width="0.5" stroke-linejoin="round"/>
<polygon points="449,703 541,696 541,712 449,720" fill="#74d8d2" stroke="#23706f" stroke-width="0.6" stroke-linejoin="round"/>
<polygon points="549,711 561,709 553,748 549,750" fill="#74d8d2" stroke="#23706f" stroke-width="0.6" stroke-linejoin="round"/>
<polygon points="449,742 541,736 541,748 449,756" fill="#5cc2bc" stroke="#23706f" stroke-width="0.6" stroke-linejoin="round"/>
<rect x="456" y="322" width="73" height="438" fill="#a8d4d0"/>
<rect x="455.3" y="305" width="6.9" height="455" fill="url(#pg)" stroke="#6e6a6a" stroke-width=".7"/>
<ellipse cx="458.75" cy="305" rx="3.75" ry="1.6" fill="#b0acac" stroke="#6f6b6b" stroke-width=".6"/>
<rect x="463.6" y="305" width="7.4" height="455" fill="url(#pg)" stroke="#6e6a6a" stroke-width=".7"/>
<ellipse cx="467.3" cy="305" rx="4.0" ry="1.6" fill="#b0acac" stroke="#6f6b6b" stroke-width=".6"/>
<rect x="473.3" y="318" width="6.9" height="442" fill="url(#pg)" stroke="#6e6a6a" stroke-width=".7"/>
<ellipse cx="476.75" cy="318" rx="3.75" ry="1.6" fill="#b0acac" stroke="#6f6b6b" stroke-width=".6"/>
<rect x="481.5" y="318" width="6.9" height="442" fill="url(#pg)" stroke="#6e6a6a" stroke-width=".7"/>
<ellipse cx="484.95" cy="318" rx="3.75" ry="1.6" fill="#b0acac" stroke="#6f6b6b" stroke-width=".6"/>
<rect x="489.6" y="320" width="6.9" height="440" fill="url(#pg)" stroke="#6e6a6a" stroke-width=".7"/>
<ellipse cx="493.05" cy="320" rx="3.75" ry="1.6" fill="#b0acac" stroke="#6f6b6b" stroke-width=".6"/>
<rect x="498.3" y="316" width="6.2" height="444" fill="url(#pg)" stroke="#6e6a6a" stroke-width=".7"/>
<ellipse cx="501.4" cy="316" rx="3.4" ry="1.6" fill="#b0acac" stroke="#6f6b6b" stroke-width=".6"/>
<rect x="506.6" y="318" width="6.2" height="442" fill="url(#pg)" stroke="#6e6a6a" stroke-width=".7"/>
<ellipse cx="509.7" cy="318" rx="3.4" ry="1.6" fill="#b0acac" stroke="#6f6b6b" stroke-width=".6"/>
<rect x="514.6999999999999" y="322" width="6.6000000000000005" height="438" fill="url(#pg)" stroke="#6e6a6a" stroke-width=".7"/>
<ellipse cx="518.0" cy="322" rx="3.6" ry="1.6" fill="#b0acac" stroke="#6f6b6b" stroke-width=".6"/>
<rect x="522.8" y="330" width="6.6000000000000005" height="430" fill="url(#pg)" stroke="#6e6a6a" stroke-width=".7"/>
<ellipse cx="526.1" cy="330" rx="3.6" ry="1.6" fill="#b0acac" stroke="#6f6b6b" stroke-width=".6"/>
<line x1="471.5" y1="338" x2="472.0" y2="345" stroke="#3c9594" stroke-width="0.9"/>
<line x1="480.3" y1="338" x2="480.8" y2="345" stroke="#3c9594" stroke-width="0.9"/>
<line x1="488.5" y1="338" x2="489.0" y2="345" stroke="#3c9594" stroke-width="0.9"/>
<line x1="497" y1="338" x2="497.5" y2="345" stroke="#3c9594" stroke-width="0.9"/>
<line x1="505.3" y1="338" x2="505.8" y2="345" stroke="#3c9594" stroke-width="0.9"/>
<line x1="513.5" y1="338" x2="514.0" y2="345" stroke="#3c9594" stroke-width="0.9"/>
<line x1="521.6" y1="338" x2="522.1" y2="345" stroke="#3c9594" stroke-width="0.9"/>
<line x1="471.5" y1="360" x2="472.0" y2="367" stroke="#3c9594" stroke-width="0.9"/>
<line x1="480.3" y1="360" x2="480.8" y2="367" stroke="#3c9594" stroke-width="0.9"/>
<line x1="488.5" y1="360" x2="489.0" y2="367" stroke="#3c9594" stroke-width="0.9"/>
<line x1="497" y1="360" x2="497.5" y2="367" stroke="#3c9594" stroke-width="0.9"/>
<line x1="505.3" y1="360" x2="505.8" y2="367" stroke="#3c9594" stroke-width="0.9"/>
<line x1="513.5" y1="360" x2="514.0" y2="367" stroke="#3c9594" stroke-width="0.9"/>
<line x1="521.6" y1="360" x2="522.1" y2="367" stroke="#3c9594" stroke-width="0.9"/>
<line x1="471.5" y1="382" x2="472.0" y2="389" stroke="#3c9594" stroke-width="0.9"/>
<line x1="480.3" y1="382" x2="480.8" y2="389" stroke="#3c9594" stroke-width="0.9"/>
<line x1="488.5" y1="382" x2="489.0" y2="389" stroke="#3c9594" stroke-width="0.9"/>
<line x1="497" y1="382" x2="497.5" y2="389" stroke="#3c9594" stroke-width="0.9"/>
<line x1="505.3" y1="382" x2="505.8" y2="389" stroke="#3c9594" stroke-width="0.9"/>
<line x1="513.5" y1="382" x2="514.0" y2="389" stroke="#3c9594" stroke-width="0.9"/>
<line x1="521.6" y1="382" x2="522.1" y2="389" stroke="#3c9594" stroke-width="0.9"/>
<line x1="471.5" y1="404" x2="472.0" y2="411" stroke="#3c9594" stroke-width="0.9"/>
<line x1="480.3" y1="404" x2="480.8" y2="411" stroke="#3c9594" stroke-width="0.9"/>
<line x1="488.5" y1="404" x2="489.0" y2="411" stroke="#3c9594" stroke-width="0.9"/>
<line x1="497" y1="404" x2="497.5" y2="411" stroke="#3c9594" stroke-width="0.9"/>
<line x1="505.3" y1="404" x2="505.8" y2="411" stroke="#3c9594" stroke-width="0.9"/>
<line x1="513.5" y1="404" x2="514.0" y2="411" stroke="#3c9594" stroke-width="0.9"/>
<line x1="521.6" y1="404" x2="522.1" y2="411" stroke="#3c9594" stroke-width="0.9"/>
<line x1="471.5" y1="426" x2="472.0" y2="433" stroke="#3c9594" stroke-width="0.9"/>
<line x1="480.3" y1="426" x2="480.8" y2="433" stroke="#3c9594" stroke-width="0.9"/>
<line x1="488.5" y1="426" x2="489.0" y2="433" stroke="#3c9594" stroke-width="0.9"/>
<line x1="497" y1="426" x2="497.5" y2="433" stroke="#3c9594" stroke-width="0.9"/>
<line x1="505.3" y1="426" x2="505.8" y2="433" stroke="#3c9594" stroke-width="0.9"/>
<line x1="513.5" y1="426" x2="514.0" y2="433" stroke="#3c9594" stroke-width="0.9"/>
<line x1="521.6" y1="426" x2="522.1" y2="433" stroke="#3c9594" stroke-width="0.9"/>
<line x1="471.5" y1="448" x2="472.0" y2="455" stroke="#3c9594" stroke-width="0.9"/>
<line x1="480.3" y1="448" x2="480.8" y2="455" stroke="#3c9594" stroke-width="0.9"/>
<line x1="488.5" y1="448" x2="489.0" y2="455" stroke="#3c9594" stroke-width="0.9"/>
<line x1="497" y1="448" x2="497.5" y2="455" stroke="#3c9594" stroke-width="0.9"/>
<line x1="505.3" y1="448" x2="505.8" y2="455" stroke="#3c9594" stroke-width="0.9"/>
<line x1="513.5" y1="448" x2="514.0" y2="455" stroke="#3c9594" stroke-width="0.9"/>
<line x1="521.6" y1="448" x2="522.1" y2="455" stroke="#3c9594" stroke-width="0.9"/>
<line x1="471.5" y1="470" x2="472.0" y2="477" stroke="#3c9594" stroke-width="0.9"/>
<line x1="480.3" y1="470" x2="480.8" y2="477" stroke="#3c9594" stroke-width="0.9"/>
<line x1="488.5" y1="470" x2="489.0" y2="477" stroke="#3c9594" stroke-width="0.9"/>
<line x1="497" y1="470" x2="497.5" y2="477" stroke="#3c9594" stroke-width="0.9"/>
<line x1="505.3" y1="470" x2="505.8" y2="477" stroke="#3c9594" stroke-width="0.9"/>
<line x1="513.5" y1="470" x2="514.0" y2="477" stroke="#3c9594" stroke-width="0.9"/>
<line x1="521.6" y1="470" x2="522.1" y2="477" stroke="#3c9594" stroke-width="0.9"/>
<line x1="471.5" y1="492" x2="472.0" y2="499" stroke="#3c9594" stroke-width="0.9"/>
<line x1="480.3" y1="492" x2="480.8" y2="499" stroke="#3c9594" stroke-width="0.9"/>
<line x1="488.5" y1="492" x2="489.0" y2="499" stroke="#3c9594" stroke-width="0.9"/>
<line x1="497" y1="492" x2="497.5" y2="499" stroke="#3c9594" stroke-width="0.9"/>
<line x1="505.3" y1="492" x2="505.8" y2="499" stroke="#3c9594" stroke-width="0.9"/>
<line x1="513.5" y1="492" x2="514.0" y2="499" stroke="#3c9594" stroke-width="0.9"/>
<line x1="521.6" y1="492" x2="522.1" y2="499" stroke="#3c9594" stroke-width="0.9"/>
<line x1="471.5" y1="514" x2="472.0" y2="521" stroke="#3c9594" stroke-width="0.9"/>
<line x1="480.3" y1="514" x2="480.8" y2="521" stroke="#3c9594" stroke-width="0.9"/>
<line x1="488.5" y1="514" x2="489.0" y2="521" stroke="#3c9594" stroke-width="0.9"/>
<line x1="497" y1="514" x2="497.5" y2="521" stroke="#3c9594" stroke-width="0.9"/>
<line x1="505.3" y1="514" x2="505.8" y2="521" stroke="#3c9594" stroke-width="0.9"/>
<line x1="513.5" y1="514" x2="514.0" y2="521" stroke="#3c9594" stroke-width="0.9"/>
<line x1="521.6" y1="514" x2="522.1" y2="521" stroke="#3c9594" stroke-width="0.9"/>
<line x1="471.5" y1="536" x2="472.0" y2="543" stroke="#3c9594" stroke-width="0.9"/>
<line x1="480.3" y1="536" x2="480.8" y2="543" stroke="#3c9594" stroke-width="0.9"/>
<line x1="488.5" y1="536" x2="489.0" y2="543" stroke="#3c9594" stroke-width="0.9"/>
<line x1="497" y1="536" x2="497.5" y2="543" stroke="#3c9594" stroke-width="0.9"/>
<line x1="505.3" y1="536" x2="505.8" y2="543" stroke="#3c9594" stroke-width="0.9"/>
<line x1="513.5" y1="536" x2="514.0" y2="543" stroke="#3c9594" stroke-width="0.9"/>
<line x1="521.6" y1="536" x2="522.1" y2="543" stroke="#3c9594" stroke-width="0.9"/>
<line x1="471.5" y1="558" x2="472.0" y2="565" stroke="#3c9594" stroke-width="0.9"/>
<line x1="480.3" y1="558" x2="480.8" y2="565" stroke="#3c9594" stroke-width="0.9"/>
<line x1="488.5" y1="558" x2="489.0" y2="565" stroke="#3c9594" stroke-width="0.9"/>
<line x1="497" y1="558" x2="497.5" y2="565" stroke="#3c9594" stroke-width="0.9"/>
<line x1="505.3" y1="558" x2="505.8" y2="565" stroke="#3c9594" stroke-width="0.9"/>
<line x1="513.5" y1="558" x2="514.0" y2="565" stroke="#3c9594" stroke-width="0.9"/>
<line x1="521.6" y1="558" x2="522.1" y2="565" stroke="#3c9594" stroke-width="0.9"/>
<line x1="471.5" y1="580" x2="472.0" y2="587" stroke="#3c9594" stroke-width="0.9"/>
<line x1="480.3" y1="580" x2="480.8" y2="587" stroke="#3c9594" stroke-width="0.9"/>
<line x1="488.5" y1="580" x2="489.0" y2="587" stroke="#3c9594" stroke-width="0.9"/>
<line x1="497" y1="580" x2="497.5" y2="587" stroke="#3c9594" stroke-width="0.9"/>
<line x1="505.3" y1="580" x2="505.8" y2="587" stroke="#3c9594" stroke-width="0.9"/>
<line x1="513.5" y1="580" x2="514.0" y2="587" stroke="#3c9594" stroke-width="0.9"/>
<line x1="521.6" y1="580" x2="522.1" y2="587" stroke="#3c9594" stroke-width="0.9"/>
<line x1="471.5" y1="602" x2="472.0" y2="609" stroke="#3c9594" stroke-width="0.9"/>
<line x1="480.3" y1="602" x2="480.8" y2="609" stroke="#3c9594" stroke-width="0.9"/>
<line x1="488.5" y1="602" x2="489.0" y2="609" stroke="#3c9594" stroke-width="0.9"/>
<line x1="497" y1="602" x2="497.5" y2="609" stroke="#3c9594" stroke-width="0.9"/>
<line x1="505.3" y1="602" x2="505.8" y2="609" stroke="#3c9594" stroke-width="0.9"/>
<line x1="513.5" y1="602" x2="514.0" y2="609" stroke="#3c9594" stroke-width="0.9"/>
<line x1="521.6" y1="602" x2="522.1" y2="609" stroke="#3c9594" stroke-width="0.9"/>
<line x1="471.5" y1="624" x2="472.0" y2="631" stroke="#3c9594" stroke-width="0.9"/>
<line x1="480.3" y1="624" x2="480.8" y2="631" stroke="#3c9594" stroke-width="0.9"/>
<line x1="488.5" y1="624" x2="489.0" y2="631" stroke="#3c9594" stroke-width="0.9"/>
<line x1="497" y1="624" x2="497.5" y2="631" stroke="#3c9594" stroke-width="0.9"/>
<line x1="505.3" y1="624" x2="505.8" y2="631" stroke="#3c9594" stroke-width="0.9"/>
<line x1="513.5" y1="624" x2="514.0" y2="631" stroke="#3c9594" stroke-width="0.9"/>
<line x1="521.6" y1="624" x2="522.1" y2="631" stroke="#3c9594" stroke-width="0.9"/>
<line x1="471.5" y1="646" x2="472.0" y2="653" stroke="#3c9594" stroke-width="0.9"/>
<line x1="480.3" y1="646" x2="480.8" y2="653" stroke="#3c9594" stroke-width="0.9"/>
<line x1="488.5" y1="646" x2="489.0" y2="653" stroke="#3c9594" stroke-width="0.9"/>
<line x1="497" y1="646" x2="497.5" y2="653" stroke="#3c9594" stroke-width="0.9"/>
<line x1="505.3" y1="646" x2="505.8" y2="653" stroke="#3c9594" stroke-width="0.9"/>
<line x1="513.5" y1="646" x2="514.0" y2="653" stroke="#3c9594" stroke-width="0.9"/>
<line x1="521.6" y1="646" x2="522.1" y2="653" stroke="#3c9594" stroke-width="0.9"/>
<line x1="471.5" y1="668" x2="472.0" y2="675" stroke="#3c9594" stroke-width="0.9"/>
<line x1="480.3" y1="668" x2="480.8" y2="675" stroke="#3c9594" stroke-width="0.9"/>
<line x1="488.5" y1="668" x2="489.0" y2="675" stroke="#3c9594" stroke-width="0.9"/>
<line x1="497" y1="668" x2="497.5" y2="675" stroke="#3c9594" stroke-width="0.9"/>
<line x1="505.3" y1="668" x2="505.8" y2="675" stroke="#3c9594" stroke-width="0.9"/>
<line x1="513.5" y1="668" x2="514.0" y2="675" stroke="#3c9594" stroke-width="0.9"/>
<line x1="521.6" y1="668" x2="522.1" y2="675" stroke="#3c9594" stroke-width="0.9"/>
<line x1="471.5" y1="690" x2="472.0" y2="697" stroke="#3c9594" stroke-width="0.9"/>
<line x1="480.3" y1="690" x2="480.8" y2="697" stroke="#3c9594" stroke-width="0.9"/>
<line x1="488.5" y1="690" x2="489.0" y2="697" stroke="#3c9594" stroke-width="0.9"/>
<line x1="497" y1="690" x2="497.5" y2="697" stroke="#3c9594" stroke-width="0.9"/>
<line x1="505.3" y1="690" x2="505.8" y2="697" stroke="#3c9594" stroke-width="0.9"/>
<line x1="513.5" y1="690" x2="514.0" y2="697" stroke="#3c9594" stroke-width="0.9"/>
<line x1="521.6" y1="690" x2="522.1" y2="697" stroke="#3c9594" stroke-width="0.9"/>
<line x1="471.5" y1="712" x2="472.0" y2="719" stroke="#3c9594" stroke-width="0.9"/>
<line x1="480.3" y1="712" x2="480.8" y2="719" stroke="#3c9594" stroke-width="0.9"/>
<line x1="488.5" y1="712" x2="489.0" y2="719" stroke="#3c9594" stroke-width="0.9"/>
<line x1="497" y1="712" x2="497.5" y2="719" stroke="#3c9594" stroke-width="0.9"/>
<line x1="505.3" y1="712" x2="505.8" y2="719" stroke="#3c9594" stroke-width="0.9"/>
<line x1="513.5" y1="712" x2="514.0" y2="719" stroke="#3c9594" stroke-width="0.9"/>
<line x1="521.6" y1="712" x2="522.1" y2="719" stroke="#3c9594" stroke-width="0.9"/>
<line x1="471.5" y1="734" x2="472.0" y2="741" stroke="#3c9594" stroke-width="0.9"/>
<line x1="480.3" y1="734" x2="480.8" y2="741" stroke="#3c9594" stroke-width="0.9"/>
<line x1="488.5" y1="734" x2="489.0" y2="741" stroke="#3c9594" stroke-width="0.9"/>
<line x1="497" y1="734" x2="497.5" y2="741" stroke="#3c9594" stroke-width="0.9"/>
<line x1="505.3" y1="734" x2="505.8" y2="741" stroke="#3c9594" stroke-width="0.9"/>
<line x1="513.5" y1="734" x2="514.0" y2="741" stroke="#3c9594" stroke-width="0.9"/>
<line x1="521.6" y1="734" x2="522.1" y2="741" stroke="#3c9594" stroke-width="0.9"/>
<line x1="471.5" y1="756" x2="472.0" y2="763" stroke="#3c9594" stroke-width="0.9"/>
<line x1="480.3" y1="756" x2="480.8" y2="763" stroke="#3c9594" stroke-width="0.9"/>
<line x1="488.5" y1="756" x2="489.0" y2="763" stroke="#3c9594" stroke-width="0.9"/>
<line x1="497" y1="756" x2="497.5" y2="763" stroke="#3c9594" stroke-width="0.9"/>
<line x1="505.3" y1="756" x2="505.8" y2="763" stroke="#3c9594" stroke-width="0.9"/>
<line x1="513.5" y1="756" x2="514.0" y2="763" stroke="#3c9594" stroke-width="0.9"/>
<line x1="521.6" y1="756" x2="522.1" y2="763" stroke="#3c9594" stroke-width="0.9"/>
<rect x="441.5" y="152" width="6.5" height="608" fill="#46a9a8" stroke="#23706f" stroke-width=".8"/>
<rect x="443.0" y="152" width="1.6" height="608" fill="#7ee0e0"/>
<rect x="542.5" y="180" width="6.5" height="580" fill="#46a9a8" stroke="#23706f" stroke-width=".8"/>
<rect x="544.0" y="180" width="1.6" height="580" fill="#7ee0e0"/>
<polygon points="440,149 558,132.5 563,139 440,158.5" fill="#46a9a8" stroke="#23706f" stroke-width="0.8" stroke-linejoin="round"/>
<line x1="443" y1="152" x2="557" y2="136.5" stroke="#8ae8e2" stroke-width="1.2"/>
<polygon points="441,151 551,175 550,186 446,162" fill="#46a9a8" stroke="#23706f" stroke-width="0.8" stroke-linejoin="round"/>
<line x1="446" y1="156" x2="548" y2="179.5" stroke="#8ae8e2" stroke-width="1.2"/>
<polygon points="554,135 563,138 551,184 542,181" fill="#46a9a8" stroke="#23706f" stroke-width="0.8" stroke-linejoin="round"/>
<line x1="558" y1="139" x2="547" y2="180" stroke="#8ae8e2" stroke-width="1.2"/>
<polygon points="431,207 434,204 461,207 457,209" fill="#8c5cd4" stroke="#5a2a98" stroke-width="0.7" stroke-linejoin="round"/>
<polygon points="457,209 461,207 461,327 457,332" fill="#7a48c0" stroke="#5a2a98" stroke-width="0.7" stroke-linejoin="round"/>
<polygon points="431,207 457,209 457,332 431,330" fill="url(#ab)" stroke="#6838a8" stroke-width="0.7" stroke-linejoin="round"/>
<polygon points="479.6,199 482.6,196 509.7,196 506,198" fill="#8c5cd4" stroke="#5a2a98" stroke-width="0.7" stroke-linejoin="round"/>
<polygon points="506,198 509.7,196 509.7,308 506,313" fill="#6a38b0" stroke="#5a2a98" stroke-width="0.7" stroke-linejoin="round"/>
<polygon points="479.6,199 506,198 506,313 479.6,314" fill="url(#ab)" stroke="#6838a8" stroke-width="0.7" stroke-linejoin="round"/>
<polygon points="527.6,192 530.6,189 549,189 545,191" fill="#8c5cd4" stroke="#5a2a98" stroke-width="0.7" stroke-linejoin="round"/>
<polygon points="545,191 549,189 549,336 545,341" fill="#7a48c0" stroke="#5a2a98" stroke-width="0.7" stroke-linejoin="round"/>
<polygon points="527.6,192 545,191 545,341 527.6,342" fill="url(#ab)" stroke="#6838a8" stroke-width="0.7" stroke-linejoin="round"/>
<line x1="447" y1="158" x2="545" y2="289" stroke="#2a8682" stroke-width="2.6"/>
<line x1="449" y1="166" x2="545" y2="262" stroke="#2a8682" stroke-width="2.4"/>
<line x1="552" y1="143" x2="448" y2="269" stroke="#2a8682" stroke-width="2.6"/>
<line x1="546" y1="188" x2="462" y2="266" stroke="#2a8682" stroke-width="2.4"/>
<line x1="556" y1="200" x2="520" y2="330" stroke="#2f908c" stroke-width="1.6"/>
<rect x="441.5" y="152" width="6.5" height="208" fill="#46a9a8" stroke="#23706f" stroke-width=".8"/>
<rect x="443.0" y="152" width="1.6" height="208" fill="#7ee0e0"/>
<polygon points="563,202 566,193 575,193 573,202" fill="#8a5ad2" stroke="#5a2a98" stroke-width="0.7" stroke-linejoin="round"/>
<polygon points="563,202 570,202 570,319 563,318" fill="#b48cf0" stroke="#6838a8" stroke-width="0.6" stroke-linejoin="round"/>
<polygon points="570,202 573,202 573,317 570,319" fill="#8a58d0" stroke="#5a2a98" stroke-width="0.6" stroke-linejoin="round"/>
<polygon points="559,221 562,212 570.5,212 568.5,221" fill="#8a5ad2" stroke="#5a2a98" stroke-width="0.7" stroke-linejoin="round"/>
<polygon points="559,221 566,221 566,339 559,338" fill="#b48cf0" stroke="#6838a8" stroke-width="0.6" stroke-linejoin="round"/>
<polygon points="566,221 568.5,221 568.5,337 566,339" fill="#8a58d0" stroke="#5a2a98" stroke-width="0.6" stroke-linejoin="round"/>
<polygon points="554.5,240 557.5,231 565,231 563,240" fill="#8a5ad2" stroke="#5a2a98" stroke-width="0.7" stroke-linejoin="round"/>
<polygon points="554.5,240 561.5,240 561.5,357 554.5,356" fill="#b48cf0" stroke="#6838a8" stroke-width="0.6" stroke-linejoin="round"/>
<polygon points="561.5,240 563,240 563,355 561.5,357" fill="#8a58d0" stroke="#5a2a98" stroke-width="0.6" stroke-linejoin="round"/>
<rect x="542.5" y="180" width="6.5" height="180" fill="#46a9a8" stroke="#23706f" stroke-width=".8"/>
<rect x="544.0" y="180" width="1.6" height="180" fill="#7ee0e0"/>
<polygon points="429.6,217.7 432.6,214.7 458,220.8 454,222.8" fill="#8c5cd4" stroke="#5a2a98" stroke-width="0.7" stroke-linejoin="round"/>
<polygon points="454,222.8 458,220.8 458,332.8 454,337.8" fill="#7a48c0" stroke="#5a2a98" stroke-width="0.7" stroke-linejoin="round"/>
<polygon points="429.6,217.7 454,222.8 454,337.8 429.6,332.7" fill="url(#ap)" stroke="#6838a8" stroke-width="0.7" stroke-linejoin="round"/>
<polygon points="472.6,226.7 475.6,223.7 501.4,229.8 497,231.8" fill="#8c5cd4" stroke="#5a2a98" stroke-width="0.7" stroke-linejoin="round"/>
<polygon points="497,231.8 501.4,229.8 501.4,343.8 497,348.8" fill="#7a48c0" stroke="#5a2a98" stroke-width="0.7" stroke-linejoin="round"/>
<polygon points="472.6,226.7 497,231.8 497,348.8 472.6,343.7" fill="url(#ap)" stroke="#6838a8" stroke-width="0.7" stroke-linejoin="round"/>
<polygon points="516.7,237 519.7,234 545.5,241.5 542.3,243.5" fill="#8c5cd4" stroke="#5a2a98" stroke-width="0.7" stroke-linejoin="round"/>
<polygon points="542.3,243.5 545.5,241.5 545.5,354.5 542.3,359.5" fill="#7a48c0" stroke="#5a2a98" stroke-width="0.7" stroke-linejoin="round"/>
<polygon points="516.7,237 542.3,243.5 542.3,359.5 516.7,353" fill="url(#ap)" stroke="#6838a8" stroke-width="0.7" stroke-linejoin="round"/>
<line x1="545" y1="612" x2="650" y2="760" stroke="#4e2c1e" stroke-width="2.7"/>
<polygon points="415,429 431,427 455,436 452,470 446,497 424,508" fill="#72d9da" stroke="#23706f" stroke-width="0.8" stroke-linejoin="round"/>
<polygon points="415,429 431,427 446,497 424,508" fill="#62c8c6" stroke="#23706f" stroke-width="0.6" stroke-linejoin="round"/>
<line x1="420" y1="432" x2="440" y2="490" stroke="#2c8885" stroke-width=".8"/>
<rect x="441.5" y="420" width="6.5" height="140" fill="#46a9a8" stroke="#23706f" stroke-width=".8"/>
<rect x="443.0" y="420" width="1.6" height="140" fill="#7ee0e0"/>
<polygon points="556,474 729,500 727,507 650,508 556,496" fill="#72d9da" stroke="#23706f" stroke-width="0.8" stroke-linejoin="round"/>
<polygon points="556,472 729,499 729,503 556,480" fill="#58bab8" stroke="#23706f" stroke-width="0.6" stroke-linejoin="round"/>
<polygon points="556,589 692,521 710,523 556,608" fill="#72d9da" stroke="#23706f" stroke-width="0.8" stroke-linejoin="round"/>
<polygon points="384,553 436,490 448,494 398,566" fill="#58bab8" stroke="#23706f" stroke-width="0.8" stroke-linejoin="round"/>
<polygon points="398,566 448,494 448,508 404,570" fill="#429f9e" stroke="#23706f" stroke-width="0.6" stroke-linejoin="round"/>
<rect x="441.5" y="480" width="6.5" height="68" fill="#46a9a8" stroke="#23706f" stroke-width=".8"/>
<rect x="443.0" y="480" width="1.6" height="68" fill="#7ee0e0"/>
<polygon points="386,552 546,517 729,499 730,510 546,532 390,567" fill="#58bab8" stroke="#23706f" stroke-width="0.8" stroke-linejoin="round"/>
<polygon points="390,560 546,525 729,504 730,510 546,532 390,567" fill="#72d9da" stroke="#23706f" stroke-width="0.6" stroke-linejoin="round"/>
<polygon points="398,572 450,622 448,600" fill="#429f9e" stroke="#23706f" stroke-width="0.6" stroke-linejoin="round"/>
<polygon points="388,556 400,553 550,624 548,646 392,572" fill="#58bab8" stroke="#23706f" stroke-width="0.8" stroke-linejoin="round"/>
<polygon points="398,556 550,625 549,631 395,563" fill="#72d9da" stroke="#23706f" stroke-width="0.6" stroke-linejoin="round"/>
<line x1="396" y1="566" x2="549" y2="637" stroke="#23706e" stroke-width=".8"/>
<polygon points="548,626 727,501 735,514 552,646" fill="#58bab8" stroke="#23706f" stroke-width="0.8" stroke-linejoin="round"/>
<line x1="549" y1="633" x2="729" y2="507" stroke="#23706f" stroke-width=".8"/>
<line x1="550" y1="638" x2="731" y2="510" stroke="#23706f" stroke-width=".8"/>
<polygon points="549,480 561,476 558,520 549,518" fill="#72d9da" stroke="#23706f" stroke-width="0.6" stroke-linejoin="round"/>
<polygon points="549,592 561,588 558,636 549,632" fill="#72d9da" stroke="#23706f" stroke-width="0.6" stroke-linejoin="round"/>
<rect x="542.5" y="470" width="6.5" height="180" fill="#46a9a8" stroke="#23706f" stroke-width=".8"/>
<rect x="544.0" y="470" width="1.6" height="180" fill="#7ee0e0"/>
<line x1="389" y1="560" x2="216" y2="760" stroke="#4e2c1e" stroke-width="2.7"/>
<line x1="389" y1="560" x2="450" y2="760" stroke="#4e2c1e" stroke-width="2.7"/>
<line x1="729" y1="506" x2="794" y2="760" stroke="#4e2c1e" stroke-width="2.7"/>
<g transform="translate(170,726)"><path d="M0 0v-22" stroke="#1ec21e" stroke-width="3"/><path d="M-4 -18l4-10 4 10z" fill="#1ec21e"/><path d="M0 0l20 3" stroke="#5555e0" stroke-width="3"/><path d="M17 -1l11 5-11 4z" fill="#5555e0"/><path d="M0 0l-11 5" stroke="#e06868" stroke-width="3.5"/><ellipse cx="-11" cy="6" rx="4" ry="3" fill="#e06868"/><text x="-3" y="-28" font-size="7" fill="#222" font-family="Liberation Sans">Y</text><text x="25" y="14" font-size="8" fill="#333" font-family="Liberation Sans">X</text><text x="-21" y="14" font-size="7" fill="#c04040" font-family="Liberation Sans">Z</text></g>
</g></svg><!--TOWEREND-->
<!-- DIALOG -->
<div class="a" style="left:758px;top:146px;width:521px;height:472px;border:1px solid #8a8a8a;border-left-color:#222;border-bottom-color:#555;border-radius:6px 6px 0 0;background:linear-gradient(#93b1d5,#b9d4ee 20px,#bcd6ef 60px,#c4dcf2 200px,#b9d3ec)"></div>
<div class="dt" style="left:767px;top:155px">Antenna Properties</div>
<!-- help/close -->
<div class="a" style="left:1225px;top:154px;width:22px;height:12px;border:1px solid #9ab0cc;border-radius:2px;background:linear-gradient(#d4e2f2,#bcd0ea 50%,#a9c0de 50%,#b8cde6)"></div>
<svg class="a" style="left:1225px;top:154px" width="48" height="13">
 <path d="M9 4.2q0-2 2-2t2 1.8q0 1.2-1.4 1.8-.6.3-.6 1.2" fill="none" stroke="#3a4a5a" stroke-width="1.1"/><rect x="10.4" y="8.6" width="1.2" height="1.3" fill="#3a4a5a"/>
 <path d="M31 3.5l5 5M36 3.5l-5 5" stroke="#5a2a20" stroke-width="2.6"/><path d="M31 3.5l5 5M36 3.5l-5 5" stroke="#fff" stroke-width="1.4"/>
</svg>
<div class="a" style="left:1249px;top:154px;width:22px;height:12px;border:1px solid #a05040;border-radius:2px;background:linear-gradient(#eea090,#e07868 50%,#c84a36 50%,#d06050)"></div>
<svg class="a" style="left:1249px;top:154px" width="23" height="13">
 <path d="M8.5 3.5l5 5M13.5 3.5l-5 5" stroke="#6a2a20" stroke-width="2.8"/><path d="M8.5 3.5l5 5M13.5 3.5l-5 5" stroke="#fff" stroke-width="1.5"/>
</svg>
<!-- client -->
<div class="a" style="left:764px;top:168px;width:509px;height:445px;background:#f0f0f0;border-top:1px solid #5a5a5a;border-left:1px solid #a0a0a0"></div>
<div class="a" style="left:1202px;top:169px;width:1px;height:443px;background:#fff"></div>
<!-- grid -->
<div class="a" style="left:773px;top:178px;width:267px;height:410px;background:#fff;border:1px solid #a0a0a0"></div>
<div id="grid" class="a" style="left:774px;top:179px;width:265px;height:300px">
<div class="a" style="left:0;top:0px;width:265px;height:13px;background:#fff;border-bottom:1px solid #e2e2e2"></div>
<div class="a" style="left:0;top:0px;width:118px;height:13px;background:#fff"></div>
<div class="a" style="left:118px;top:0px;width:1px;height:13px;background:#e2e2e2"></div>
<div class="gt" style="left:112px;top:0px;transform:translateX(-100%) scaleX(.92);transform-origin:100% 0">ID =</div>
<div class="gt" style="left:122px;top:0px;transform:scaleX(.9);transform-origin:0 0">1</div>
<div class="a" style="left:0;top:13px;width:265px;height:78px;background:#fff;border-bottom:1px solid #e2e2e2"></div>
<div class="a" style="left:0;top:13px;width:118px;height:78px;background:#fff"></div>
<div class="a" style="left:118px;top:13px;width:1px;height:78px;background:#e2e2e2"></div>
<div class="gt" style="left:112px;top:46px;transform:translateX(-100%) scaleX(.92);transform-origin:100% 0">Type =</div>
<div class="a" style="left:0;top:91px;width:265px;height:13px;background:#f2f2f2;border-bottom:1px solid #e2e2e2"></div>
<div class="gt" style="left:132px;top:92px;transform:translateX(-50%) scaleX(.85)">Dimensions</div>
<div class="a" style="left:0;top:104px;width:265px;height:13px;background:#fff;border-bottom:1px solid #e2e2e2"></div>
<div class="a" style="left:0;top:104px;width:118px;height:13px;background:#fff"></div>
<div class="a" style="left:118px;top:104px;width:1px;height:13px;background:#e2e2e2"></div>
<div class="a" style="left:250px;top:104px;width:1px;height:13px;background:#e2e2e2"></div>
<div class="gt" style="left:254px;top:105px;transform:scaleX(.9);transform-origin:0 0">ft</div>
<div class="gt" style="left:112px;top:105px;transform:translateX(-100%) scaleX(.92);transform-origin:100% 0">Outside Diameter (Do) =</div>
<div class="gt" style="left:122px;top:105px;transform:scaleX(.9);transform-origin:0 0">4</div>
<div class="a" style="left:0;top:117px;width:265px;height:13px;background:#f2f2f2;border-bottom:1px solid #e2e2e2"></div>
<div class="gt" style="left:132px;top:118px;transform:translateX(-50%) scaleX(.85)">Properties</div>
<div class="a" style="left:0;top:130px;width:265px;height:13px;background:#fff;border-bottom:1px solid #e2e2e2"></div>
<div class="a" style="left:0;top:130px;width:118px;height:13px;background:#fff"></div>
<div class="a" style="left:118px;top:130px;width:1px;height:13px;background:#e2e2e2"></div>
<div class="a" style="left:242px;top:130px;width:1px;height:13px;background:#e2e2e2"></div>
<div class="gt" style="left:246px;top:131px;transform:scaleX(.9);transform-origin:0 0">ft.2</div>
<div class="gt" style="left:112px;top:131px;transform:translateX(-100%) scaleX(.92);transform-origin:100% 0">Outside Aperture Area (A) =</div>
<div class="gt" style="left:122px;top:131px;transform:scaleX(.9);transform-origin:0 0">12.566</div>
<div class="a" style="left:0;top:143px;width:265px;height:13px;background:#fff;border-bottom:1px solid #e2e2e2"></div>
<div class="a" style="left:0;top:143px;width:118px;height:13px;background:#fff"></div>
<div class="a" style="left:118px;top:143px;width:1px;height:13px;background:#e2e2e2"></div>
<div class="a" style="left:250px;top:143px;width:1px;height:13px;background:#e2e2e2"></div>
<div class="gt" style="left:254px;top:144px;transform:scaleX(.9);transform-origin:0 0">&nbsp;b</div>
<div class="gt" style="left:112px;top:144px;transform:translateX(-100%) scaleX(.92);transform-origin:100% 0">Weight (W) =</div>
<div class="gt" style="left:122px;top:144px;transform:scaleX(.9);transform-origin:0 0">140</div>
<div class="a" style="left:0;top:156px;width:265px;height:13px;background:#a8f6f8;border-bottom:1px solid #e2e2e2"></div>
<div class="gt" style="left:132px;top:157px;transform:translateX(-50%) scaleX(.85)">Radial Ice (1)</div>
<div class="a" style="left:0;top:169px;width:265px;height:13px;background:#fff;border-bottom:1px solid #e2e2e2"></div>
<div class="a" style="left:0;top:169px;width:118px;height:13px;background:#a8f6f8"></div>
<div class="a" style="left:118px;top:169px;width:1px;height:13px;background:#e2e2e2"></div>
<div class="a" style="left:250px;top:169px;width:1px;height:13px;background:#e2e2e2"></div>
<div class="gt" style="left:254px;top:170px;transform:scaleX(.9);transform-origin:0 0">in</div>
<div class="gt" style="left:112px;top:170px;transform:translateX(-100%) scaleX(.92);transform-origin:100% 0">Thickness (t<sub>i1</sub>) =</div>
<div class="gt" style="left:122px;top:170px;transform:scaleX(.9);transform-origin:0 0">0.5</div>
<div class="a" style="left:0;top:182px;width:265px;height:13px;background:#fff;border-bottom:1px solid #e2e2e2"></div>
<div class="a" style="left:0;top:182px;width:118px;height:13px;background:#a8f6f8"></div>
<div class="a" style="left:118px;top:182px;width:1px;height:13px;background:#e2e2e2"></div>
<div class="a" style="left:242px;top:182px;width:1px;height:13px;background:#e2e2e2"></div>
<div class="gt" style="left:246px;top:183px;transform:scaleX(.9);transform-origin:0 0">ft.2</div>
<div class="gt" style="left:112px;top:183px;transform:translateX(-100%) scaleX(.92);transform-origin:100% 0">Outside Aperture Area (A<sub>i1</sub>) =</div>
<div class="gt" style="left:122px;top:183px;transform:scaleX(.9);transform-origin:0 0">13.795</div>
<div class="a" style="left:0;top:195px;width:265px;height:13px;background:#fff;border-bottom:1px solid #e2e2e2"></div>
<div class="a" style="left:0;top:195px;width:118px;height:13px;background:#a8f6f8"></div>
<div class="a" style="left:118px;top:195px;width:1px;height:13px;background:#e2e2e2"></div>
<div class="a" style="left:250px;top:195px;width:1px;height:13px;background:#e2e2e2"></div>
<div class="gt" style="left:254px;top:196px;transform:scaleX(.9);transform-origin:0 0">&nbsp;b</div>
<div class="gt" style="left:112px;top:196px;transform:translateX(-100%) scaleX(.92);transform-origin:100% 0">Weight (W<sub>i1</sub>) =</div>
<div class="gt" style="left:122px;top:196px;transform:scaleX(.9);transform-origin:0 0">282</div>
<div class="a" style="left:0;top:208px;width:265px;height:13px;background:#a8f6f8;border-bottom:1px solid #e2e2e2"></div>
<div class="gt" style="left:132px;top:209px;transform:translateX(-50%) scaleX(.85)">Radial Ice (2)</div>
<div class="a" style="left:0;top:221px;width:265px;height:13px;background:#fff;border-bottom:1px solid #e2e2e2"></div>
<div class="a" style="left:0;top:221px;width:118px;height:13px;background:#a8f6f8"></div>
<div class="a" style="left:118px;top:221px;width:1px;height:13px;background:#e2e2e2"></div>
<div class="a" style="left:250px;top:221px;width:1px;height:13px;background:#e2e2e2"></div>
<div class="gt" style="left:254px;top:222px;transform:scaleX(.9);transform-origin:0 0">in</div>
<div class="gt" style="left:112px;top:222px;transform:translateX(-100%) scaleX(.92);transform-origin:100% 0">Thickness (t<sub>i2</sub>) =</div>
<div class="gt" style="left:122px;top:222px;transform:scaleX(.9);transform-origin:0 0">0</div>
<div class="a" style="left:0;top:234px;width:265px;height:13px;background:#fff;border-bottom:1px solid #e2e2e2"></div>
<div class="a" style="left:0;top:234px;width:118px;height:13px;background:#a8f6f8"></div>
<div class="a" style="left:118px;top:234px;width:1px;height:13px;background:#e2e2e2"></div>
<div class="a" style="left:242px;top:234px;width:1px;height:13px;background:#e2e2e2"></div>
<div class="gt" style="left:246px;top:235px;transform:scaleX(.9);transform-origin:0 0">ft.2</div>
<div class="gt" style="left:112px;top:235px;transform:translateX(-100%) scaleX(.92);transform-origin:100% 0">Outside Aperture Area (A<sub>i2</sub>) =</div>
<div class="gt" style="left:122px;top:235px;transform:scaleX(.9);transform-origin:0 0">0</div>
<div class="a" style="left:0;top:247px;width:265px;height:13px;background:#fff;border-bottom:1px solid #e2e2e2"></div>
<div class="a" style="left:0;top:247px;width:118px;height:13px;background:#a8f6f8"></div>
<div class="a" style="left:118px;top:247px;width:1px;height:13px;background:#e2e2e2"></div>
<div class="a" style="left:250px;top:247px;width:1px;height:13px;background:#e2e2e2"></div>
<div class="gt" style="left:254px;top:248px;transform:scaleX(.9);transform-origin:0 0">&nbsp;b</div>
<div class="gt" style="left:112px;top:248px;transform:translateX(-100%) scaleX(.92);transform-origin:100% 0">Weight (W<sub>i2</sub>) =</div>
<div class="gt" style="left:122px;top:248px;transform:scaleX(.9);transform-origin:0 0">0</div>
<div class="a" style="left:0;top:260px;width:265px;height:13px;background:#f2f2f2;border-bottom:1px solid #e2e2e2"></div>
<div class="gt" style="left:132px;top:261px;transform:translateX(-50%) scaleX(.85)">Display Dimensions</div>
<div class="a" style="left:0;top:273px;width:265px;height:13px;background:#fff;border-bottom:1px solid #e2e2e2"></div>
<div class="a" style="left:0;top:273px;width:118px;height:13px;background:#fff"></div>
<div class="a" style="left:118px;top:273px;width:1px;height:13px;background:#e2e2e2"></div>
<div class="a" style="left:250px;top:273px;width:1px;height:13px;background:#e2e2e2"></div>
<div class="gt" style="left:254px;top:274px;transform:scaleX(.9);transform-origin:0 0">ft</div>
<div class="gt" style="left:112px;top:274px;transform:translateX(-100%) scaleX(.92);transform-origin:100% 0">Dish Depth (Ld) =</div>
<div class="gt" style="left:122px;top:274px;transform:scaleX(.9);transform-origin:0 0">0</div>
<div class="a" style="left:0;top:286px;width:265px;height:13px;background:#fff;border-bottom:1px solid #e2e2e2"></div>
<div class="a" style="left:0;top:286px;width:118px;height:13px;background:#fff"></div>
<div class="a" style="left:118px;top:286px;width:1px;height:13px;background:#e2e2e2"></div>
<div class="a" style="left:250px;top:286px;width:1px;height:13px;background:#e2e2e2"></div>
<div class="gt" style="left:254px;top:287px;transform:scaleX(.9);transform-origin:0 0">ft</div>
<div class="gt" style="left:112px;top:287px;transform:translateX(-100%) scaleX(.92);transform-origin:100% 0">Radome Depth (Lr) =</div>
<div class="gt" style="left:122px;top:287px;transform:scaleX(.9);transform-origin:0 0">0</div>
<div class="rad" style="left:121px;top:14.7px"></div>
<div class="gt" style="left:131px;top:12.7px;transform:scaleX(.86);transform-origin:0 0">Paraboloid without Radome</div>
<div class="rad sel" style="left:121px;top:25.6px"></div>
<div class="gt" style="left:131px;top:23.6px;transform:scaleX(.86);transform-origin:0 0">Paraboloid with Radome</div>
<div class="rad" style="left:121px;top:36.5px"></div>
<div class="gt" style="left:131px;top:34.5px;transform:scaleX(.86);transform-origin:0 0">Paraboloid with Shroud (HP)</div>
<div class="rad" style="left:121px;top:47.4px"></div>
<div class="gt" style="left:131px;top:45.4px;transform:scaleX(.86);transform-origin:0 0">Grid</div>
<div class="rad" style="left:121px;top:58.3px"></div>
<div class="gt" style="left:131px;top:56.3px;transform:scaleX(.86);transform-origin:0 0">Flat (Rectangular)</div>
<div class="rad" style="left:121px;top:69.2px"></div>
<div class="gt" style="left:131px;top:67.2px;transform:scaleX(.86);transform-origin:0 0">Round (Cylindrical)</div>
<div class="rad" style="left:121px;top:80.1px"></div>
<div class="gt" style="left:131px;top:78.1px;transform:scaleX(.86);transform-origin:0 0">Generic</div></div>
<!-- tab strip -->
<div class="a" style="left:764px;top:596px;width:438px;height:15px;background:#ebebeb;border-top:1px solid #d0d0d0"></div>
<div class="a" style="left:766px;top:597px;width:30px;height:14px;background:#ececec"></div>
<svg class="a" style="left:766px;top:597px" width="30" height="14"><path d="M9 7l3-3v6z" fill="#999"/><path d="M22 4l3 3-3 3z" fill="#aaa"/></svg>
<div class="a" style="left:796px;top:597px;width:100px;height:14px;background:#fff;border-left:1px solid #a0a0a0;border-bottom:1px solid #777"></div>
<div class="gt" style="left:802px;top:598px;font-weight:bold;font-size:9.5px;color:#000;transform:scaleX(.91);transform-origin:0 0">Andrew 4' w/Radome</div>
<div class="a" style="left:896px;top:597px;width:152px;height:14px;background:#e2e2e2;border:1px solid #a0a0a0;border-top:none"></div>
<div class="gt" style="left:911px;top:598px;transform:scaleX(.88);transform-origin:0 0">3960.026/3960.046 w/Pipe Mount</div>
<!-- right buttons -->
<div class="btn" style="left:1210px;top:176px;width:56px;height:18px"></div>
<svg class="a" style="left:1213px;top:180px" width="12" height="11"><rect x=".5" y=".5" width="11" height="10" fill="#e8d850" stroke="#222" stroke-width="1"/><rect x="2" y="3" width="8" height="6" fill="#111"/><path d="M2.5 4.5h7M2.5 6.5h7M2.5 8.2h7" stroke="#fff" stroke-width=".6" stroke-dasharray="1 1"/></svg>
<div class="gt" style="left:1227px;top:181px;color:#111">Table</div>
<div class="btn" style="left:1210px;top:197px;width:16px;height:17px"></div>
<div class="btn" style="left:1229px;top:197px;width:16px;height:17px"></div>
<div class="btn" style="left:1249px;top:197px;width:16px;height:17px"></div>
<svg class="a" style="left:1210px;top:197px" width="56" height="17">
 <rect x="4" y="5" width="8" height="8" fill="none" stroke="#666" stroke-dasharray="1.4 1" stroke-width=".8"/><path d="M4 4l3-1" stroke="#d8c820" stroke-width="1.4"/>
 <path d="M24 4.5l8 8M32 4.5l-8 8" stroke="#b01818" stroke-width="1.6"/>
 <rect x="43" y="5" width="8" height="7" fill="#888"/><path d="M51 3v11M50 3h2M50 14h2" stroke="#222" stroke-width=".7"/>
</svg>
<div class="btn" style="left:1211px;top:553px;width:55px;height:15px;border-color:#3c8ad0;box-shadow:inset 0 0 0 1px #9ad0f0"></div>
<div class="gt c" style="left:1211px;top:555px;width:55px;color:#111"><u>O</u>K</div>
<div class="btn" style="left:1211px;top:572px;width:55px;height:15px"></div>
<div class="gt c" style="left:1211px;top:574px;width:55px;color:#111"><u>C</u>ancel</div>
<div class="btn" style="left:1211px;top:590px;width:55px;height:14px"></div>
<div class="gt c" style="left:1211px;top:591px;width:55px;color:#111"><u>H</u>elp</div>
<!-- diagram -->
<svg class="a" style="left:1045px;top:175px" width="155" height="420">
 <defs>
  <linearGradient id="dl" x1="0" x2="1"><stop offset="0" stop-color="#a0a6b0"/><stop offset="1" stop-color="#9199a4"/></linearGradient>
  <radialGradient id="dr" cx=".55" cy=".5" r=".8"><stop offset="0" stop-color="#e2e6f0"/><stop offset="1" stop-color="#a8b2cc"/></radialGradient>
  <radialGradient id="cg" cx=".5" cy=".5" r=".55"><stop offset="0" stop-color="#d8e0f2"/><stop offset="1" stop-color="#95a1b6"/></radialGradient>
 </defs>
 <path d="M82 9C60 20 34 40 22 80C16 100 14 115 14 130C14 185 45 225 82 230Z" fill="url(#dl)" stroke="#222" stroke-width="1"/>
 <path d="M82 9C110 30 131 70 131 130C131 185 110 215 82 230Z" fill="url(#dr)" stroke="#222" stroke-width="1"/>
 <path d="M82 9V230" stroke="#333" stroke-width="1"/>
 <path d="M14 150v107M82 232v25M131 150v107" stroke="#555" stroke-width=".9"/>
 <path d="M13 255h119" stroke="#333" stroke-width="1.2"/>
 <text x="40" y="250" font-family="Liberation Sans" font-size="15" fill="#222">L<tspan font-size="10" dy="1">d</tspan></text>
 <text x="103" y="250" font-family="Liberation Sans" font-size="15" fill="#222">L<tspan font-size="10" dy="1">r</tspan></text>
 <circle cx="70.5" cy="333" r="50" fill="#1ee8f0" stroke="#222" stroke-width="1"/>
 <circle cx="70" cy="333.5" r="46" fill="url(#cg)" stroke="#222" stroke-width="1"/>
 <path d="M23 345v43M117 345v43M121.5 338v35" stroke="#444" stroke-width=".9"/>
 <path d="M22 386h96M117 370h8" stroke="#333" stroke-width="1.1"/>
 <text x="124" y="368" font-family="Liberation Sans" font-size="13" font-weight="bold" fill="#222">t<tspan font-size="9" dy="1">i</tspan></text>
 <text x="67" y="398" font-family="Liberation Sans" font-size="15" fill="#222">D<tspan font-size="10" dy="1">o</tspan></text>
</svg>

</body></html>
